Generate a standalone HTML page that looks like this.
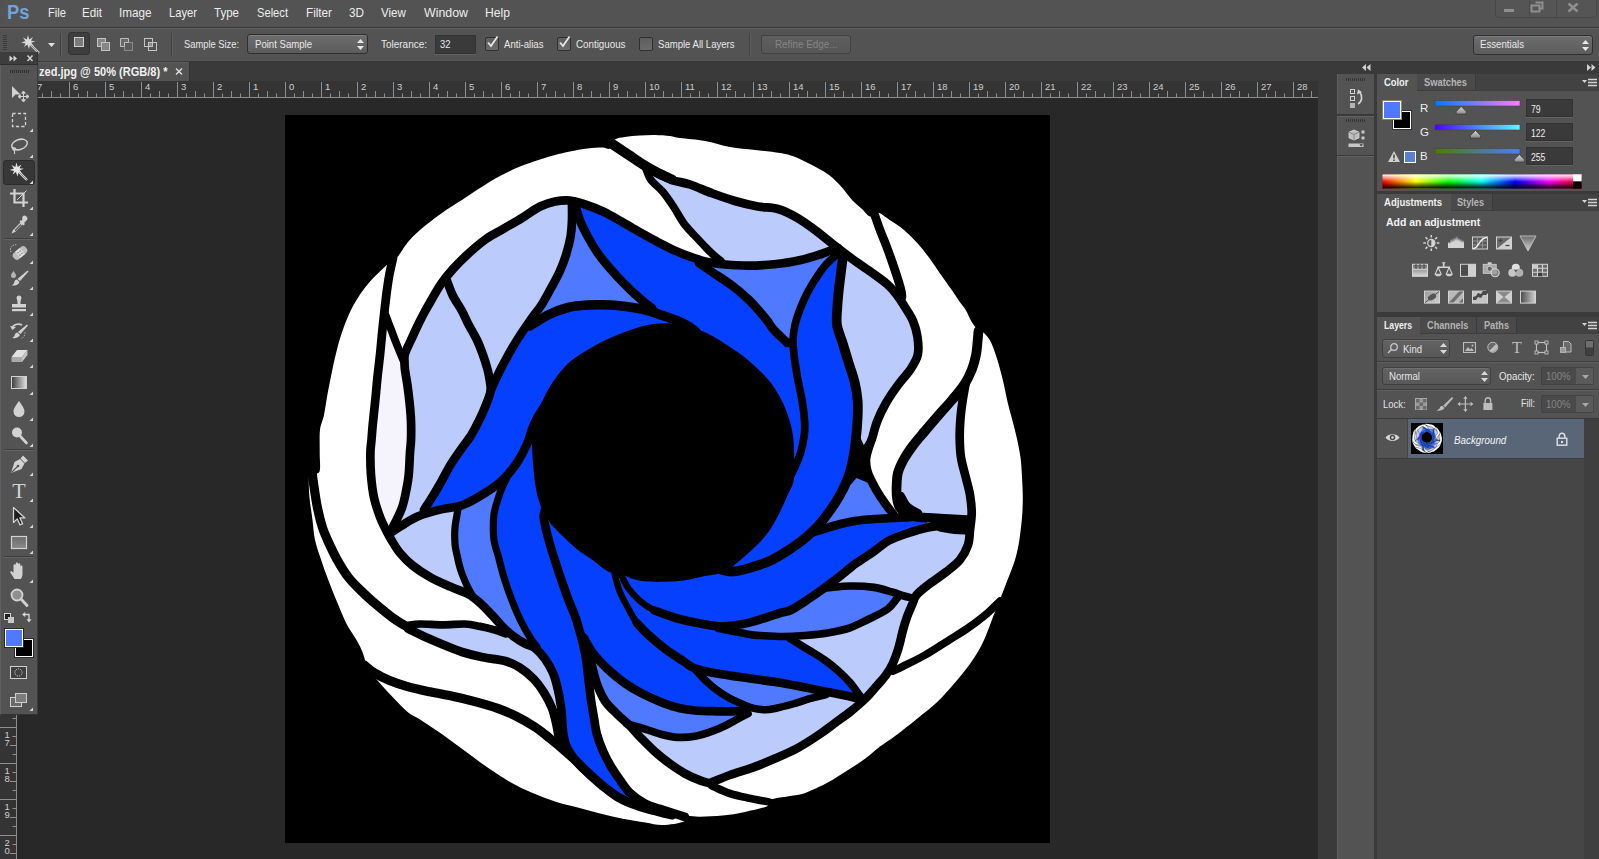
<!DOCTYPE html>
<html>
<head>
<meta charset="utf-8">
<title>Photoshop</title>
<style>
html,body{margin:0;padding:0;}
body{width:1599px;height:859px;overflow:hidden;background:#282828;position:relative;font-family:"Liberation Sans","DejaVu Sans",sans-serif;font-size:11px;color:#e4e4e4;}
.abs,.abs>*{position:absolute;}
.t{position:absolute;white-space:nowrap;line-height:14px;height:14px;transform-origin:0 50%;}
#menubar{left:0;top:0;width:1599px;height:27px;background:#535353;}
#menubar .t{top:6px;font-size:13px;color:#ededed;}
#optbar{left:0;top:28px;width:1599px;height:33px;background:#535353;box-shadow:inset 0 1px 0 #646464;}
#optbar .t{top:9px;color:#e8e8e8;}
.dd{box-sizing:border-box;border:1px solid #2e2e2e;border-radius:3px;background:linear-gradient(#6d6d6d,#5c5c5c);box-shadow:inset 0 1px 0 #7e7e7e;}
.dd2{border-color:#3f3f3f;background:linear-gradient(#636363,#585858);box-shadow:inset 0 1px 0 #707070;}
.inp{box-sizing:border-box;background:#3a3a3a;border:1px solid #333;box-shadow:0 1px 0 #626262;}
.cb{box-sizing:border-box;width:14px;height:14px;border:1px solid #2f2f2f;border-radius:2px;background:linear-gradient(#5e5e5e,#6b6b6b);}
.vsep{width:1px;background:#3f3f3f;box-shadow:1px 0 0 #5f5f5f;}
#tabbar{left:0;top:62px;width:1336px;height:19px;background:#3a3a3a;}
#tab{left:0;top:62px;width:189px;height:19px;background:#535353;box-shadow:inset 0 1px 0 #5e5e5e;}
#vscroll{left:1318px;top:62px;width:18px;height:797px;background:#3a3a3a;}
#toolbar{left:0;top:52px;width:38px;height:663px;background:#535353;box-sizing:border-box;border-left:1px solid #606060;border-right:1px solid #3b3b3b;border-bottom:1px solid #333;}
#dock{left:1336px;top:62px;width:263px;height:797px;background:#3a3a3a;}
.panel{background:#535353;}
.ptabs{background:#424242;height:17px;}
.ptab{top:0;height:17px;box-sizing:border-box;font-weight:bold;font-size:11px;}
.ptab.on{background:#535353;color:#f0f0f0;}
.ptab.off{background:#4a4a4a;color:#b4b4b4;border-right:1px solid #3a3a3a;border-bottom:1px solid #3e3e3e;}
.ptab .t{top:1px;}
.dis{color:#858585 !important;}
</style>
</head>
<body>
<div id="menubar" class="abs">
<div class="t" id="ps" style="left:7px;top:1px;height:22px;line-height:22px;font-size:19.500px;font-weight:bold;color:#74a3d8;transform:scaleX(0.943)">Ps</div>
<div class="t m" style="left:47.5px;transform:scaleX(0.859)">File</div>
<div class="t m" style="left:82px;transform:scaleX(0.893)">Edit</div>
<div class="t m" style="left:118.5px;transform:scaleX(0.899)">Image</div>
<div class="t m" style="left:169px;transform:scaleX(0.861)">Layer</div>
<div class="t m" style="left:214px;transform:scaleX(0.887)">Type</div>
<div class="t m" style="left:257px;transform:scaleX(0.858)">Select</div>
<div class="t m" style="left:306px;transform:scaleX(0.900)">Filter</div>
<div class="t m" style="left:349px;transform:scaleX(0.902)">3D</div>
<div class="t m" style="left:381px;transform:scaleX(0.894)">View</div>
<div class="t m" style="left:424px;transform:scaleX(0.951)">Window</div>
<div class="t m" style="left:485px;transform:scaleX(0.935)">Help</div>
<!-- window controls -->
<div style="left:1495px;top:-4px;width:102px;height:22px;box-sizing:border-box;border:1px solid #474747;border-radius:4px;background:#555;"></div>
<div style="left:1529px;top:0;width:1px;height:17px;background:#494949;"></div>
<div style="left:1556px;top:0;width:1px;height:17px;background:#494949;"></div>
<div style="left:1504px;top:9px;width:10px;height:3px;background:#8f8f8f;"></div>
<svg style="left:1530px;top:1px" width="14" height="12" viewBox="0 0 14 12"><path d="M5.5 1.5h7v6h-2M1.5 4.5h8v6h-8z" fill="none" stroke="#8f8f8f" stroke-width="2"/></svg>
<svg style="left:1567px;top:2px" width="12" height="11" viewBox="0 0 12 11"><path d="M1.5 1.5l9 8M10.5 1.5l-9 8" stroke="#8f8f8f" stroke-width="2.4"/></svg>
</div>
<div style="left:0;top:27px;width:1599px;height:1px;background:#383838;" class="abs"></div>
<div id="optbar" class="abs">
<!-- grip -->
<div style="left:3px;top:7px;width:4px;height:16px;background:repeating-linear-gradient(#3c3c3c 0 1px,transparent 1px 2px);"></div>
<!-- wand icon -->
<svg style="left:20px;top:6px" width="22" height="20" viewBox="0 0 22 20"><path d="M8 8L19 19" stroke="#d6d6d6" stroke-width="2.2"/><path d="M8 8L19 19" stroke="#6b6b6b" stroke-width="0.8"/><path d="M8 1l1.2 4.6L13 3l-2 3.8 4.4.4-4.2 1.6 2.6 3.4-3.8-1.8L9 15l-1.6-4.4L4 13l1.6-3.6L1 8.6l4.4-1.4L3 3.6l3.8 1.8z" fill="#dcdcdc"/></svg>
<svg style="left:48px;top:15px" width="7" height="4" viewBox="0 0 7 4"><path d="M0 0h7L3.5 4z" fill="#e0e0e0"/></svg>
<div class="vsep" style="left:60px;top:5px;height:23px;"></div>
<!-- selection mode buttons -->
<div style="left:68px;top:4px;width:22px;height:23px;box-sizing:border-box;border:1px solid #333;border-radius:3px;background:#3e3e3e;"></div>
<svg style="left:68px;top:4px" width="96" height="23" viewBox="0 0 96 23">
<rect x="6.5" y="5.5" width="9" height="9" fill="#7a7a7a" stroke="#cfcfcf"/>
<rect x="29.500" y="6.500" width="8" height="8" fill="#858585" stroke="#c4c4c4"/><rect x="33.500" y="10.500" width="8" height="8" fill="#858585" stroke="#c4c4c4"/><rect x="34" y="11" width="3.500" height="3.500" fill="#858585"/>
<rect x="56.500" y="10.500" width="8" height="8" fill="#5a5a5a" stroke="#8a8a8a"/><path d="M52.500 6.500h8v4h-4v4h-4z" fill="#6a6a6a" stroke="#bdbdbd"/>
<rect x="76.500" y="6.500" width="8" height="8" fill="none" stroke="#c4c4c4"/><rect x="80.500" y="10.500" width="8" height="8" fill="none" stroke="#c4c4c4"/><rect x="81" y="11" width="3" height="3" fill="#8a8a8a"/>
</svg>
<div class="vsep" style="left:171px;top:5px;height:23px;"></div>
<div class="t o" style="left:184px;transform:scaleX(0.849)">Sample Size:</div>
<div class="dd" style="left:247px;top:6px;width:121px;height:20px;"></div>
<div class="t o" style="left:255px;transform:scaleX(0.871)">Point Sample</div>
<svg style="left:357px;top:11px" width="7" height="11" viewBox="0 0 7 11"><path d="M0 4h7L3.500 0zM0 7h7L3.500 11z" fill="#e8e8e8"/></svg>
<div class="t o" style="left:381px;transform:scaleX(0.906)">Tolerance:</div>
<div class="inp" style="left:435px;top:7px;width:41px;height:19px;"></div>
<div class="t o" style="left:440px;transform:scaleX(0.857)">32</div>
<div class="cb" style="left:485px;top:9px;"></div>
<svg style="left:486px;top:7px" width="14" height="14" viewBox="0 0 14 14"><path d="M2 7.500l3 3.500L11.500 1.500" fill="none" stroke="#e6e6e6" stroke-width="1.800"/></svg>
<div class="t o" style="left:504px;transform:scaleX(0.873)">Anti-alias</div>
<div class="cb" style="left:557px;top:9px;"></div>
<svg style="left:558px;top:7px" width="14" height="14" viewBox="0 0 14 14"><path d="M2 7.500l3 3.500L11.500 1.500" fill="none" stroke="#e6e6e6" stroke-width="1.800"/></svg>
<div class="t o" style="left:575.500px;transform:scaleX(0.889)">Contiguous</div>
<div class="cb" style="left:639px;top:9px;"></div>
<div class="t o" style="left:657.500px;transform:scaleX(0.869)">Sample All Layers</div>
<div class="vsep" style="left:749px;top:5px;height:23px;"></div>
<div style="left:761px;top:7px;width:90px;height:19px;box-sizing:border-box;border:1px solid #414141;border-radius:3px;background:linear-gradient(#5f5f5f,#565656);"></div>
<div class="t o dis" style="left:774.500px;transform:scaleX(0.896)">Refine Edge...</div>
<div class="dd" style="left:1473px;top:7px;width:120px;height:20px;"></div>
<div class="t o" style="left:1480px;transform:scaleX(0.878)">Essentials</div>
<svg style="left:1582px;top:12px" width="7" height="11" viewBox="0 0 7 11"><path d="M0 4h7L3.500 0zM0 7h7L3.500 11z" fill="#e8e8e8"/></svg>
</div>
<div style="left:0;top:61px;width:1599px;height:1px;background:#3a3a3a;" class="abs"></div>
<div id="tabbar" class="abs"></div>
<div id="tab" class="abs"><div class="t" id="tabt" style="left:38.500px;top:3px;font-weight:bold;font-size:12px;color:#f0f0f0;transform:scaleX(0.920)">zed.jpg @ 50% (RGB/8) *</div><svg style="left:175px;top:6px" width="8" height="7" viewBox="0 0 8 7"><path d="M1 0.500l6 6M7 0.500l-6 6" stroke="#e0e0e0" stroke-width="1.400"/></svg></div>
<div style="left:189px;top:62px;width:1px;height:19px;background:#2f2f2f" class="abs"></div>
<svg class="abs" id="hruler" style="left:0;top:81px" width="1318" height="17" viewBox="0 81 1318 17"><rect x="0" y="81" width="1318" height="17" fill="#343434"/><defs><pattern id="hp" x="285" y="81" width="36" height="17" patternUnits="userSpaceOnUse"><path d="M0.500 1v15M9.500 12.500v3.500M18.500 10v6M27.500 12.500v3.500" stroke="#8f8f8f" stroke-width="1"/></pattern></defs><rect x="17" y="81" width="1301" height="16" fill="url(#hp)"/><rect x="0" y="97" width="1318" height="1" fill="#8c8c8c"/><g font-family="Liberation Sans, sans-serif" font-size="9.500" fill="#cdcdcd"><text x="37" y="89.700">7</text><text x="73" y="89.700">6</text><text x="109" y="89.700">5</text><text x="145" y="89.700">4</text><text x="181" y="89.700">3</text><text x="217" y="89.700">2</text><text x="253" y="89.700">1</text><text x="289" y="89.700">0</text><text x="325" y="89.700">1</text><text x="361" y="89.700">2</text><text x="397" y="89.700">3</text><text x="433" y="89.700">4</text><text x="469" y="89.700">5</text><text x="505" y="89.700">6</text><text x="541" y="89.700">7</text><text x="577" y="89.700">8</text><text x="613" y="89.700">9</text><text x="649" y="89.700">10</text><text x="685" y="89.700">11</text><text x="721" y="89.700">12</text><text x="757" y="89.700">13</text><text x="793" y="89.700">14</text><text x="829" y="89.700">15</text><text x="865" y="89.700">16</text><text x="901" y="89.700">17</text><text x="937" y="89.700">18</text><text x="973" y="89.700">19</text><text x="1009" y="89.700">20</text><text x="1045" y="89.700">21</text><text x="1081" y="89.700">22</text><text x="1117" y="89.700">23</text><text x="1153" y="89.700">24</text><text x="1189" y="89.700">25</text><text x="1225" y="89.700">26</text><text x="1261" y="89.700">27</text><text x="1297" y="89.700">28</text></g></svg>
<svg class="abs" id="vruler" style="left:0;top:97px" width="17" height="762" viewBox="0 97 17 762"><rect x="0" y="97" width="17" height="762" fill="#343434"/><defs><pattern id="vp" x="0" y="115" width="17" height="36" patternUnits="userSpaceOnUse"><path d="M0 0.500h16M12.500 9.500h3.500M10 18.500h6M12.500 27.500h3.500" stroke="#8f8f8f" stroke-width="1"/></pattern></defs><rect x="0" y="97" width="16" height="762" fill="url(#vp)"/><rect x="16" y="97" width="1" height="762" fill="#8c8c8c"/><g font-family="Liberation Sans, sans-serif" font-size="9.500" fill="#cdcdcd"><text x="4.500" y="125.5">0</text><text x="4.500" y="161.5">1</text><text x="4.500" y="197.5">2</text><text x="4.500" y="233.5">3</text><text x="4.500" y="269.5">4</text><text x="4.500" y="305.5">5</text><text x="4.500" y="341.5">6</text><text x="4.500" y="377.5">7</text><text x="4.500" y="413.5">8</text><text x="4.500" y="449.5">9</text><text x="4.500" y="485.5">1</text><text x="4.500" y="494.0">0</text><text x="4.500" y="521.5">1</text><text x="4.500" y="530.0">1</text><text x="4.500" y="557.5">1</text><text x="4.500" y="566.0">2</text><text x="4.500" y="593.5">1</text><text x="4.500" y="602.0">3</text><text x="4.500" y="629.5">1</text><text x="4.500" y="638.0">4</text><text x="4.500" y="665.5">1</text><text x="4.500" y="674.0">5</text><text x="4.500" y="701.5">1</text><text x="4.500" y="710.0">6</text><text x="4.500" y="737.5">1</text><text x="4.500" y="746.0">7</text><text x="4.500" y="773.5">1</text><text x="4.500" y="782.0">8</text><text x="4.500" y="809.5">1</text><text x="4.500" y="818.0">9</text><text x="4.500" y="845.5">2</text><text x="4.500" y="854.0">0</text></g></svg>
<div class="abs" style="left:0;top:81px;width:17px;height:16px;background:#343434;border-right:1px solid #555;border-bottom:1px solid #555;box-sizing:border-box"></div>
<div id="vscroll" class="abs"></div>
<svg class="abs" id="art" style="left:285px;top:115px" width="765" height="728" viewBox="285 115 765 728">
<g id="artg">
<rect x="285" y="115" width="765" height="728" fill="#000"/>
<path fill="#fff" d="M615 139.5C617.5 137.6 620.8 137.7 625 137C629.2 136.3 635 135.8 640 135.5C645 135.2 650 134.9 655 135C660 135.1 665.8 135.5 670 136C674.2 136.5 674.2 137.2 680 138C685.8 138.8 696.7 139.5 705 141C713.3 142.5 721.7 145.5 730 147C738.3 148.5 746.7 149 755 150C763.3 151 773.8 152 780 153C786.2 154 787.5 154.2 792.5 156C797.5 157.8 803.9 160.8 810 164C816.1 167.2 823.7 171.1 829 175C834.3 178.9 838.2 183.3 842 187.5C845.8 191.7 848.7 196.4 852 200C855.3 203.6 859 206.2 862 209C865 211.8 867.3 215.9 870 216.5C872.7 217.1 874.8 212.3 878 212.8C881.2 213.3 884.7 216.6 889 219.5C893.3 222.4 899.2 226 904 230C908.8 234 913.4 238.8 917.7 243.6C922 248.4 926 253.6 929.7 258.6C933.4 263.6 936.5 268.6 940 273.6C943.5 278.6 947.4 283.9 950.7 288.6C954 293.3 957.3 298.4 959.8 302C962.3 305.6 963.7 306.7 965.7 310C967.7 313.3 969.7 318.8 971.7 322C973.7 325.2 976.3 328.2 977.7 329.5C979.1 330.8 978 327.8 980 329.5C982 331.2 986.9 335 989.8 340C992.7 345 995 352.6 997.3 359.6C999.5 366.6 1001.5 374.8 1003.3 382C1005 389.2 1006.3 396.7 1007.8 403C1009.3 409.3 1010.8 414.2 1012.3 420C1013.8 425.8 1015.4 431.8 1016.8 438C1018.2 444.2 1019.6 451 1020.5 457.5C1021.4 464 1021.6 470.2 1022 477C1022.4 483.8 1022.8 491.2 1022.8 498C1022.8 504.8 1022.5 511.1 1022 517.6C1021.5 524.1 1020.5 531.6 1019.8 537C1019 542.4 1018.5 545.7 1017.5 550C1016.5 554.3 1015.7 558 1014 563C1012.3 568 1009.7 574.3 1007.5 580C1005.3 585.7 1002.6 593 1001 597C999.4 601 998.8 602 998 604C997.2 606 997.3 605.5 996 609C994.7 612.5 992 619.8 990 625C988 630.2 986.1 635.4 984 640C981.9 644.6 980.3 647.9 977.5 652.5C974.7 657.1 971.2 662.4 967.3 667.6C963.3 672.9 958.8 678.3 953.8 684C948.8 689.7 943 696.5 937.2 702C931.4 707.5 924.7 712.5 919.2 717C913.7 721.5 908.7 725.5 904.2 729C899.8 732.5 896.5 735.1 892.5 738C888.5 740.9 884.5 743.2 880 746.6C875.5 750 870.8 754.6 865.3 758.6C859.8 762.6 853.6 766.6 847.3 770.6C841 774.6 834.7 778.9 827.7 782.6C820.7 786.3 811.5 790.8 805.2 793C798.9 795.2 795 795.1 790 796C785 796.9 778.5 797.7 775 798.4C771.5 799.1 770.2 798.8 769 800C767.8 801.2 771.7 803.9 767.7 805.9C763.7 807.9 752.5 810.3 745 811.9C737.5 813.5 730.1 814.8 722.6 815.6C715.1 816.4 706.3 816.6 700 816.7C693.7 816.8 687.7 815.6 685 816.4C682.3 817.2 687.4 820.3 683.6 821.7C679.9 823.1 668.9 824.9 662.5 825C656.1 825.1 651.9 823.4 645.3 822.4C638.7 821.4 630.3 820.2 622.8 818.7C615.2 817.2 607.5 815.3 600 813.4C592.5 811.5 585.2 809.4 577.7 807.4C570.2 805.4 562.5 803.8 555 801.4C547.5 799 540.1 796.2 532.6 793C525.1 789.8 517.5 786.1 510 781.9C502.5 777.7 495.1 772.8 487.6 767.6C480.1 762.5 472.5 756.5 465 751C457.5 745.5 450 739.8 442.5 734.5C435 729.2 425.8 723.2 420 719.5C414.2 715.8 412.2 715.8 407.6 712C403 708.2 397.6 702.2 392.6 697C387.6 691.8 382 685.5 377.5 680.5C373 675.5 367.5 670 365.5 667C363.5 664 366 665 365.5 662.5C365 660 364 655.8 362.5 652C361 648.2 359.1 644.7 356.5 640C353.9 635.3 349.8 630.2 346.6 624C343.4 617.8 340.5 610.2 337.5 603C334.5 595.8 331.2 587.9 328.5 580.6C325.8 573.4 323.2 566.3 321 559.5C318.8 552.7 316.4 546.6 315 540C313.6 533.4 313.4 527.1 312.5 520C311.6 512.9 310.1 504.3 309.5 497.6C308.9 490.9 308.7 483.6 308.8 479.6C308.9 475.6 308.6 474.9 310.3 473.6C312.1 472.3 317.7 475.5 319.3 472C320.9 468.5 319.6 459.5 319.7 452.5C319.8 445.5 319.3 436.2 320 430C320.7 423.8 322.7 421.2 324 415C325.3 408.8 326.4 400.1 327.8 392.6C329.2 385.1 330.7 377.5 332.3 370C333.9 362.5 335.6 354.5 337.5 347.5C339.4 340.5 341.2 334.2 343.5 328C345.8 321.8 348.2 315.6 351 310C353.8 304.4 356.8 299.4 360 294.6C363.2 289.8 366.8 285.3 370.5 281C374.2 276.7 378.9 272.5 382.5 269C386.1 265.5 389.8 262 392.3 260C394.8 258 394.9 260 397.5 257C400.1 254 404.2 246.5 408 242C411.8 237.5 415.5 234 420 230C424.5 226 430 221.8 435 218C440 214.2 445.5 210.5 450 207.5C454.5 204.5 457 203.2 462 200C467 196.8 473.7 192 480 188C486.3 184 493.3 179.6 500 176C506.7 172.4 513.3 169.2 520 166.5C526.7 163.8 534.2 161.4 540 159.5C545.8 157.6 550 156.3 555 155C560 153.7 564.6 152.6 570 151.5C575.4 150.4 582.1 149.2 587.5 148.5C592.9 147.8 598.8 147.5 602.5 147.5C606.2 147.5 607.9 149.8 610 148.5C612.1 147.2 612.5 141.4 615 139.5Z"/>
<path fill="#f5f3fb" d="M387 329L386 329.2L385 330.5L382.2 361.2L380.8 371L378.2 399.8L376.2 415.2L376.2 419.2L373.2 448.2L373.2 468.8L375.2 489.5L378 502.8L383.5 518.8L386.8 525.5L388.8 526.8L390.5 525.8L399.5 507L404 488.5L406.2 473.8L407.2 449.8L408.2 441.5L408.5 426L406.8 400.5L405 389.5L404.5 382.8L402.5 373.2L401.8 362.5L393.2 342L389.2 330.8L388 329.2Z"/>
<path fill="#bacbfc" d="M856.2 702L855 700.5L829 695.2L826.2 696.8L809 701L791.5 706.8L771.8 711.5L760 711.8L752 710.2L750.2 711.2L750 714.5L748.8 715.8L728.5 726.8L712.8 733.8L696.2 738.5L685.8 739.8L674.5 739.5L655.5 735.2L643.2 731L641.8 731.2L640.8 732.5L640.8 733.5L656.5 749.5L673 762.8L682 768.8L690 773.2L701.8 778.2L709.2 780.2L731.8 771.2L749.8 765.8L765.5 759.8L781.2 753L796.8 745.5L814.5 734.5L825 727.2L856 703.5ZM416.5 627.2L416.5 629.5L421.8 632.5L457.8 647.8L478.8 653.8L505.2 658L517.2 662.8L527.8 669.8L536.8 678L546.8 691.5L553.8 705.2L555.8 706.5L557.5 705.5L557.8 703L555.8 691.8L551.5 676.2L547.8 668.2L544.2 662.5L540 656.8L532.5 649.5L526 647.2L515 641L508.5 636L505.2 636.2L502.2 634.8L493.2 631.8L467 626.2L458.5 626.2L444.5 627.2L418.2 626.2ZM910.2 601L909.2 599.8L901.5 597.5L900.5 597.8L894.2 606L887.5 612L879.5 616.5L864.2 623.8L861.2 625.8L849.5 630.5L833.5 634.5L824.2 636L811.2 637.5L800.8 638L799 639L798.8 640.5L800 642L819 653.5L829.5 660.5L843.8 672.8L852 681.2L862.5 695.2L864.8 695.2L881.8 676.2L887.2 668.2L891.8 659.2L897.2 642.8L902 623L904.2 616.2L909.8 603.5ZM966.8 534.2L965.8 533L950.5 532L939.8 530L937.5 529L935 529L920.2 532.2L896 540.2L887.2 544.5L872 556.2L855 567.2L838.2 581.2L838 582.8L839 584L840 584.2L845.8 583.8L859.2 583.8L871.2 584.5L879 585.8L889.2 588.5L902.5 593.2L911.2 595.5L912.8 595.2L915.5 591.8L921.8 586.2L948.8 566.5L957.5 558.5L962.5 551.2L965 545.5L966.8 538ZM393 535L393 537.5L397.2 544.8L402.2 551.5L411.5 561L418.2 566.5L430.2 574.2L442.8 580.5L463 588.5L464.8 587.5L465 586L460.5 576L457.5 566.8L453 546L452.8 528.5L455.2 513.5L455.2 511.8L454.2 510.5L451.5 510.2L442.5 511.8L431.2 514.8L418.8 519L402.2 528.2L395.8 532.5ZM958.8 399.5L956.8 399.5L919 443L908.2 458L902 470.2L900.2 478L899.8 492.2L900.8 493.5L903 494.8L907 502.5L912 507L919.2 511L921.2 514L927 514.8L939.2 515L961.8 516.5L968 516.2L969 515L968.8 505.2L967.2 494.5L958.5 460.2L957.5 452.8L957 445L957.2 422.8L958 413.2L959.8 400.8ZM444.5 285.8L443.2 286L439.2 291.5L424 318.8L408 352.8L407 356.8L407.5 369L410.5 385.8L410.5 389L413.2 411L414 425.8L413.8 442.5L412.8 450.8L411.8 474L410.8 481.8L407.5 498.5L405 508L399.8 519.2L400 521L401.8 522L413.5 515.2L420 512.8L421 511.8L421.5 509L434 489L450.5 459.2L467 436.8L471.2 429.8L481 410L487 394.8L488 390.8L487.8 384L485.2 371L476.8 345.8L471 334.2L466 325.8L459.2 311.5L451 298.2L446.2 286.8ZM847.8 259.5L846 260.5L845.5 262L843 280.2L840 314.5L840 323.8L841.5 330.2L846.5 344.2L851.2 360.8L856 374.5L859.8 390L860.8 397.2L861.2 410L860.5 426.8L859.2 439.8L862 445.5L863.8 446.5L866 445L868 441.8L874.5 420.2L881 406L889.5 392L898.2 380L905.8 371.5L913.8 358.5L915.5 352L915.2 340L913.5 330.5L910.2 321.2L898 301L892 293L886.2 287L879.8 281.5L848.8 259.8ZM567.8 203.2L564.2 203L555.2 204.2L547.5 206.2L542 208.5L536.2 211.8L520.2 222.5L491 238.8L483.8 244L469.5 256.2L455.2 270.5L449 278L449 279.2L456 296L464.5 309.5L471 323.5L476.5 332.8L480.8 341.2L484.5 350.5L489.5 365.8L491.2 374L492.2 375.2L494.2 375.2L495.5 373.8L507 351.2L516.8 335L530 315.8L536.2 308L540.8 301.2L553.8 277.5L559.2 266L563.2 255L566.2 244.2L568.8 230.8L569.2 204.8ZM652.2 176.5L652.2 177.8L653 179L665 190.8L670 197.2L676.8 207.2L683 218.2L688.2 225.5L706.2 244.8L714.2 252.8L721.5 258.5L724 261.5L740.2 262.8L756.8 262.8L770.5 262L786.5 260L797.8 258L812 254.2L829 248.2L830 247L829.8 245.5L819.5 236.8L802.8 224.5L790.2 217L781 212.8L771.5 210.5L756.5 209.2L736.2 204.5L717 198.2L691 187.8L671 182.8L655.2 175.2L653.2 175.2Z"/>
<path fill="#4f7aff" d="M705 675.8L705.2 677.2L713.5 685L726.5 694.2L734.5 698.5L752.8 706L758.2 707.2L767.8 707.8L779.2 705.5L797 700.8L802.8 698.5L813.2 695.5L814.2 694.2L814.2 693.2L813.2 692L787.8 686.8L784 686.5L774.2 684.5L730.5 678.8L711.8 675.5L707.2 674.2L706 674.5ZM594.8 664.2L596 671.5L598 678.8L602.2 690.2L605.8 697.2L610 703L630.2 722.5L638.8 724.5L656.8 730.8L666.5 733.2L675.5 735L684.8 735.2L696.2 733.8L713 728.8L726 723L735 718L736 716.8L735.8 715.2L734 714.2L700.2 713.8L687.8 712.8L679.5 711.2L664.5 706.8L647.2 699.2L634.5 692.8L625.8 687.2L613.2 678L605.8 671.2L597.8 663L595.8 663ZM894.8 596.2L893.5 594.8L877.8 590.2L869.8 589L858 588.2L847.2 588.2L826.5 590.2L820.8 593.8L804.2 605.5L790.8 613.2L780.5 615.8L769.5 619.8L755.5 624L742 627L741 628.2L741 629.2L742.8 630.8L754.8 633L777.2 634.2L789.5 634.2L809.8 633L832 630L847.5 626.2L856 623L882.5 609.8L886.8 607L891.2 602.5L894.5 598ZM496.2 489.2L479.2 500L468.2 505.8L461 508.5L460 509.5L456.8 528.5L456.8 541.5L457.5 548.5L461.2 565.2L464 573.8L466.8 579.5L467.5 582.2L473.8 594L483.5 602.2L509.8 630L517.5 636L525 640.5L526.2 640.8L528 639.8L528.2 638.2L523 629.8L518 620.2L510 601.2L502 578.2L492.2 542.2L491.2 530.5L491.5 517.2L493 508L498.2 492.2L498 490.2ZM888.8 513L877.5 497.5L868.8 481.8L866.8 480.2L856.5 476.2L854.2 477.8L849.2 483.8L843 496.5L834.2 510.5L826 521.5L825.8 523.2L826.8 524.5L827.8 524.8L843.2 520.2L851.8 518.5L868 516.5L886.8 515.5L888.5 514.5ZM829.8 256.2L828.8 255L827.5 254.8L811.8 260.2L800.2 263.2L777 267L758.2 268.2L738.8 268.2L722.5 267.2L714.8 266.2L713 267.2L712.8 268.8L713.8 270L735.5 284.5L749.8 296.8L757.5 304.8L768 317L775.8 328L787.8 339.5L788.8 339.8L789.8 339.5L791 337.5L791.2 331.8L794 319.2L797.8 308.5L802.5 297.2L806.5 289.2L814.5 276L822.5 265L829.2 258.2ZM575.5 222.8L574.5 224L574.2 231L572.2 243L568.8 255.8L564.8 267.2L559.8 278L546.2 302.8L540.5 311.2L540.5 313.2L541.2 314L543.5 314L550 310.5L559.5 306.8L568.8 304L577.8 302.5L589.5 301.8L607.8 301.8L619.2 302.5L638 305.2L639.2 305L640.2 303.8L640 302.2L630.5 294L617.8 281.2L599.2 260L593.2 251.5L587 241L578.2 223.5L577.5 222.8Z"/>
<path fill="#0540ff" d="M618.5 581.2L619 585L622 593.2L635.8 618.8L638.5 620.8L649.8 632.5L663.8 644.5L674.8 652.5L694.2 665.2L705 668.2L724.2 672L789.2 681.2L832.5 690.2L847.5 692.8L851.5 694L852.8 693.8L853.8 692.5L853.5 690.8L849 684.8L838.8 674.2L832 668.2L816.5 657.2L792.8 643L787.5 639L753 637.5L719 631L715.2 628.8L709.8 628.2L689.8 624.5L679.2 622L667 618.2L653 612.8L651.2 610.5L641.8 604.5L635.8 599.5L626.8 589L622.2 580.8L620.5 579.8L619.5 580ZM547.5 521L547.2 523L548.5 528.8L557.5 560L568.5 592.2L578 616L581 625L583.5 634.2L586.2 636.5L590.8 645L595.2 651.8L598.8 656L610.8 668.2L623 678.5L637.8 688.2L659.5 698.8L668 702L683.2 706.2L696.8 708L733.2 708.8L737.5 708.2L738.8 707.2L739 705.8L738 704.5L728.2 700L716 692.2L703.5 681.5L693.5 670.8L689 668.8L682.8 664L666.8 653.8L654.8 644.2L644.5 635.2L635 625L633.8 621L631 617L621.5 599.2L616.5 587.2L612.5 571.8L604.8 567.5L592.5 557.5L577.8 547.8L566.8 538L555.2 526.2L550.2 520.2L548.2 520.2ZM927.5 522.5L926.5 521.2L919.2 520.8L914 519.8L875.8 521.5L854.8 523.8L845.8 525.5L833.5 528.8L813.8 535L803.2 544L793 551.2L774.2 562.5L762 567.8L738 574.2L728 574.8L721.8 573.5L719.8 572.2L718.2 572L707 573.8L688 578.2L681.5 579.2L661 580.2L651.2 580.2L640 579.2L631 576.5L625.8 574L623.8 575L623.5 576.5L629 586.8L635.8 595L643.5 602L652.5 607.8L656.2 608L670.5 613.5L680.8 616.5L693.5 619.5L711.2 622.8L717.5 623.5L727 623.5L740.2 621.8L754 618.5L767.2 614.5L775 611.5L782.5 609.2L787.2 608.5L792 606.5L802.5 600L822.2 586.2L837.5 574.8L852.5 562.2L870.5 550.5L884.8 539.5L892.8 535.5L901.5 532.2L918.8 526.8L926.5 525L927.5 523.8ZM530.8 443L524.2 456.2L520.2 463L514 471.8L509 477.5L500.5 497L496.5 510.5L495.5 517.8L495.5 536.8L496.8 544.2L500.2 555.2L505.2 575.2L513.2 598.5L521 617L527.5 629.5L534 640.2L538.5 645.5L539.2 648L544.5 653.5L548 658.2L552.8 666L556.5 674L559.5 684L562.5 697.5L564.2 709.8L565.8 733L567.8 742L570 747.5L577 757.8L597.8 777.8L609 787.2L616.5 792.8L624.5 797.2L626.8 797.2L627.8 796L627.5 794.5L624.5 791.2L615 778L606.5 764.5L598 746.5L594.2 735.2L588.8 704.8L583.5 659.2L581 646.5L576 627.5L573 618.2L563.8 595.2L552.2 561.5L546.8 543.2L541.5 522.5L540.8 515.2L542.2 510.2L542.8 505.8L541.2 502.8L539.2 496L536.5 481.2L534 454.2L533.8 444.2L532.8 443ZM670.8 322L670 321.2L651 314.5L637.5 311.2L614.2 308.2L592.5 307.8L575.8 309L564 311.8L552.8 316L544 320.5L531 328.8L527.8 329.2L525.8 331.5L516.2 346.2L503 370.5L493.8 390.2L492 397L486 412.2L477.5 429.8L471.8 439.5L454.8 463L449.2 472.2L442 486.2L430 505.8L430 507.8L430.8 508.5L432.5 508.8L441 506.2L453.5 504.5L460 503L466.8 500.2L477.2 494.8L490.5 486.2L498.2 480.2L506.8 471.8L515.2 460.5L520 452.5L525.5 440.8L528.5 430.5L533.5 418.5L538.5 410L543.2 403.2L551.8 386.8L563.2 371L569.5 364.5L573.5 361.2L589.8 350.5L600 344.8L616.2 337L638.8 328.8L643.5 327.5L656 325.2L670 324.8L671 323.5ZM838.2 258L835.8 258.2L827 266.8L819 277.5L813 287L807.8 296.8L801 312.5L798 321.8L796.2 329.2L795.2 338.2L795.8 352.2L800.5 382.5L804.2 398.8L807 422.2L806.8 434.2L805.2 443.8L802.2 455.5L796 470.5L792 478.2L791 484L780 508L771 525L764 535L760 539.5L749.2 550.2L732 565L731.8 566.5L732.8 567.8L735.2 568L740.5 567L764 560L774.5 555L781.2 551L800.5 537.8L808.8 530.8L815.5 524L820.2 518.5L829.2 506.2L839.2 489.8L843 482.2L845.5 475.8L849 463L851.5 449.2L854 426.5L854.8 406.5L854.2 397.8L851.8 383.8L840.5 346.8L835 331L833.5 324.2L833.5 313.8L835.2 290.8L839.2 261.2L839.2 259.2ZM580.2 206.5L579.2 207.8L579.2 209.2L583 221L588.5 232.5L597.2 247.5L603.8 256.8L614.2 269.2L636 291.5L646 300.2L652.8 305L654.2 306.5L654.8 308.5L655.8 309.8L674.5 316.2L687 321.8L692.5 325L700 332L715 339.5L735.8 352.8L751.2 365L766.8 380.2L771.2 386.2L778.8 398.5L782.5 406L786.8 417L790.2 429.5L791.2 435.5L792.2 448.5L792.2 458.5L793.2 459.8L795.2 459.8L797.8 454.8L801.2 441L802.5 431L802.5 422.8L800.8 405.5L799.5 397.5L794.8 376L792.2 360.2L790.8 346.5L790 345.8L787 345.8L785.5 345L771.2 331.2L763.8 320.5L748.8 303.5L739 294.5L726.8 285L698.2 266L696.8 264.5L695.2 261.5L679.5 255.8L662 247.5L640.2 235.8L618.2 222.8L602.5 214.2L586.2 207.8L581.2 206.2Z"/>
<g fill="none" stroke="#000" stroke-linecap="round" stroke-linejoin="round">
<path stroke-width="8.7" d="M393 258C391.8 263.7 390.3 269.7 389.3 275C388.3 280.3 387.8 284.5 387 290C386.2 295.5 385.6 301.5 384.8 308C384.1 314.5 383.3 321.2 382.5 329C381.7 336.8 380.9 346.7 380 355C379.1 363.3 378.1 371 377.3 379C376.5 387 375.8 395.5 375 403C374.2 410.5 373.4 417.8 372.8 424C372.2 430.2 371.9 435.2 371.5 440C371.1 444.8 370.5 446.7 370.4 452.5C370.3 458.3 370.4 467.5 371 475C371.6 482.5 372.5 490.6 374 497.6C375.5 504.6 378 511.6 380 517C382 522.4 384 526 386 530C388 534 389.7 537.2 392 541C394.3 544.8 396.6 548.9 400 553C403.4 557.1 407.5 561.4 412.6 565.5C417.7 569.6 424.5 574 430.7 577.5C436.9 581 443.8 583.9 450 586.6C456.2 589.4 463 591.3 468 594C473 596.7 476 599.5 480 603C484 606.5 488.2 611 492 615C495.8 619 499.3 623.5 502.8 627C506.3 630.5 509.3 633.2 513 636C516.7 638.8 521.3 641.6 525 643.6C528.7 645.6 531.7 645.4 535 648C538.3 650.6 542 654.8 545 659C548 663.2 550.8 667.8 553 673C555.2 678.2 556.7 684.3 558 690C559.3 695.7 560.2 701.2 561 707C561.8 712.8 562.1 720.3 562.5 725C562.9 729.7 562.9 731.7 563.5 735C564.1 738.3 564.7 741.7 566 745C567.3 748.3 569.2 751.7 571.5 755C573.8 758.3 576.6 761.4 580 765C583.4 768.6 588 772.7 592 776.5"/>
<path stroke-width="8.7" d="M389 534C391 530.3 392.9 527.3 395 523C397.1 518.7 400.1 513 401.9 508C403.7 503 404.6 498.5 405.7 493C406.8 487.5 408 481.8 408.7 475C409.4 468.2 409.6 458.3 410 452.5C410.4 446.7 410.8 445.2 411 440C411.2 434.8 411.2 427.2 411 421C410.8 414.8 410.2 409 409.6 403C409 397 408.2 390.5 407.4 385C406.6 379.5 405.5 373.8 405 370C404.5 366.2 404.5 364.7 404.5 362C404.5 359.3 403.9 357.3 405 353.6C406.1 349.9 408.7 345 411 340C413.3 335 416.4 328.2 418.7 323.5C421 318.8 422.4 316.1 424.6 312C426.8 307.9 429.3 303.7 432 299C434.7 294.3 437.5 289 441 284C444.5 279 448.5 274 453 269C457.5 264 462.5 259 468 254C473.5 249 480 243.2 486 239C492 234.8 498 232 504 228.5C510 225 516 221.7 522 218C528 214.3 534.5 209.2 540 206.5C545.5 203.8 550 202.5 555 201.5C560 200.5 565 200 570 200.5C575 201 579.5 202.7 585 204.5C590.5 206.3 597 208.7 603 211.5C609 214.3 615 217.9 621 221.3C627 224.7 633 228.4 639 231.8C645 235.2 651 238.5 657 241.6C663 244.7 669.5 248.1 675 250.6C680.5 253.1 685 254.8 690 256.6C695 258.4 700 260.3 705 261.5C710 262.7 713.7 263.3 720 264C726.3 264.7 735.3 265.3 742.8 265.5C750.3 265.7 758.4 265.4 765 265C771.6 264.6 776.3 264.2 782.5 263.3C788.7 262.4 795.8 261.3 802 259.8C808.2 258.3 815 256.1 820 254.5C825 252.9 829 251.1 832 250C835 248.9 836 248.7 838 248"/>
<path stroke-width="7.7" d="M384.5 312C385.5 314.7 386.5 317.3 387.5 320C388.5 322.7 389.2 324.7 390.5 328C391.8 331.3 393.3 335.7 395 340C396.7 344.3 399 349.9 400.5 353.6C402 357.3 402.8 359.2 404 362"/>
<path stroke-width="8.7" d="M874 213C876 218.7 878 224.7 880 230C882 235.3 883.9 239.5 886 245C888.1 250.5 890.6 257.5 892.5 263C894.4 268.5 896.1 273.5 897.5 278C898.9 282.5 900.2 286.8 901 290C901.8 293.2 901.7 294.7 902 297"/>
<path stroke-width="10" d="M613 144.5C618 147.8 623 151.2 628 154.5C633 157.8 638.2 161.5 643 164.5C647.8 167.5 652.2 170 657 172.5C661.8 175 667 177.2 672 179.5"/>
<path stroke-width="8.7" d="M643 164.5C647.7 167.2 652.2 169.9 657 172.5C661.8 175.1 666.5 178 672 180C677.5 182 683.2 182.2 690 184.5C696.8 186.8 705.2 190.8 712.7 193.5C720.2 196.2 727.5 198.8 735 201C742.5 203.2 750.6 205.2 757.8 206.5C765 207.8 771.4 207.1 778 209C784.6 210.9 791 214.2 797.5 218C804 221.8 810.8 226.8 817 231.5C823.2 236.2 829 241.3 835 246C841 250.7 847 255.2 853 259.5C859 263.8 865.3 267.9 871 272C876.7 276.1 882.7 280.2 887 284C891.3 287.8 893.9 291 897 295C900.1 299 902.8 303.7 905.5 308C908.2 312.3 911 316.2 913 321C915 325.8 916.7 331.3 917.5 337C918.3 342.7 919 349.5 917.7 355C916.5 360.5 913.3 365 910 370C906.7 375 902 379.5 898 385C894 390.5 889.4 397.1 886 403C882.6 408.9 879.8 414.8 877.5 420.5C875.2 426.2 874 432.3 872.5 437C871 441.7 869.6 444.8 868.5 448.5C867.4 452.2 866.2 455.5 866 459C865.8 462.5 866.2 466.1 867 469.6C867.8 473.1 869.2 476.3 871 480C872.8 483.7 875.1 488 877.5 492C879.9 496 882.8 500.2 885.5 504C888.2 507.8 890.9 511.1 893.6 514.6"/>
<path stroke-width="7.7" d="M646 169C647.7 172.7 648.2 176.2 651 180C653.8 183.8 659.2 187.5 663 192C666.8 196.5 670.2 201.7 673.7 207C677.2 212.3 680.3 218.6 684 223.6C687.7 228.6 692.3 233 696 237C699.7 241 703 244.5 706 247.6C709 250.7 711.5 253.3 714 255.5C716.5 257.7 718.7 259.2 721 261"/>
<path stroke-width="8.7" d="M447 281C449 286 450.5 291 453 296C455.5 301 459.5 306.4 462 311C464.5 315.6 465.5 318.7 468 323.5C470.5 328.3 474.5 334.8 477 340C479.5 345.2 481.2 350 483 355C484.8 360 486.5 365.5 487.7 370C488.9 374.5 489.5 378.7 490 382C490.5 385.3 490.9 387.5 490.7 390C490.5 392.5 490.3 393.3 489 397C487.7 400.7 485.2 407 483 412C480.8 417 477.9 422.8 475.7 427C473.5 431.2 472.2 433.7 470 437C467.8 440.3 465.9 442.4 462.7 447C459.5 451.6 454.5 458.3 450.7 464.5C446.9 470.7 443.3 478.2 440 484C436.7 489.8 433.7 494.7 431 499C428.3 503.3 426.3 506.3 424 510"/>
<path stroke-width="8.7" d="M572 203C572 208.7 572.2 214.3 572 220C571.8 225.7 571.5 231.2 570.5 237C569.5 242.8 567.8 249.2 566 255C564.2 260.8 562.1 266.3 559.5 272C556.9 277.7 553.5 283.5 550.5 289C547.5 294.5 544.8 299.8 541.5 305C538.2 310.2 534.4 314.4 530.5 320C526.6 325.6 521.6 332.9 518 338.5C514.4 344.1 511.8 348.6 509 353.6C506.2 358.6 503.4 363.9 501 368.6C498.6 373.3 496.2 378.4 494.5 382C492.8 385.6 492.2 387.3 491 390"/>
<path stroke-width="8.7" d="M576 208C577.5 212.7 578.6 217.2 580.6 222C582.6 226.8 585.3 232 588 237C590.7 242 593.7 247.2 597 252C600.3 256.8 603.8 261.1 607.6 265.6C611.4 270.1 615.6 274.8 619.6 279C623.6 283.2 627.6 287.2 631.6 291C635.6 294.8 640.2 298.9 643.6 301.7C647 304.5 649.2 305.9 652 308"/>
<path stroke-width="9.6" d="M529.5 326C536 322.2 542.6 317.6 549 314.5C555.4 311.4 561.6 309.1 568 307.5C574.4 305.9 580.6 305.4 587.6 305C594.6 304.6 602.5 304.6 610 305C617.5 305.4 626.3 306.6 632.6 307.5C638.9 308.4 642.7 309.2 647.7 310.5C652.7 311.8 657.7 313.8 662.7 315.5C667.7 317.2 673.3 319.2 677.7 321C682.1 322.8 686 324.7 689 326.5C692 328.3 693.7 330.2 696 332"/>
<path stroke-width="8.7" d="M699 263C703.6 266.2 707.2 268.8 712.7 272.5C718.2 276.2 726.1 281.1 732 285.5C737.9 289.9 743.3 294.6 748 299C752.7 303.4 756.8 308.3 760 312C763.2 315.7 765.2 318 767.5 321C769.8 324 770.7 326.3 774 330C777.3 333.7 783 338.7 787.5 343"/>
<path stroke-width="7.7" d="M837 254C833.3 257.5 829.3 260.8 826 264.6C822.7 268.4 820 272.1 817 276.6C814 281.1 810.8 286.4 808 291.6C805.2 296.8 802.7 302.4 800.5 308C798.3 313.6 796.2 319.7 795 325C793.8 330.3 793.2 335 793 340C792.8 345 793.2 348.7 794 355C794.8 361.3 796.2 370.1 797.5 377.6C798.8 385.1 800.8 392.9 802 400C803.2 407.1 804.1 414.2 804.5 420C804.9 425.8 805 429.5 804.3 435C803.6 440.5 802.1 447.5 800.5 453C798.9 458.5 796.2 464 794.5 468C792.8 472 791.5 474 790 477"/>
<path stroke-width="9.7" d="M843 256.5C842.3 261.7 841.7 266.4 841 272C840.3 277.6 839.4 284 838.8 290C838.2 296 837.6 302.2 837.3 308C837 313.8 836.1 319.2 837 325C837.9 330.8 840.7 336.7 842.6 343C844.5 349.3 846.6 356.1 848.6 362.6C850.6 369.1 853.1 375.8 854.6 382C856.1 388.2 857.1 394 857.6 400C858.1 406 857.9 411.7 857.6 418C857.3 424.3 856.8 431.2 856 438C855.2 444.8 854.3 452.3 853 459C851.7 465.7 850.2 472 848 478C845.8 484 843 489.5 840 495C837 500.5 833.4 505.8 829.7 511C826 516.2 822.3 521.3 818 526C813.7 530.7 809 534.9 804 539C799 543.1 793.4 546.9 787.7 550.6C782 554.3 775.9 558.1 769.6 561C763.3 563.9 756.1 566 750 567.8C743.9 569.5 737.7 571.1 733 571.5C728.3 571.9 725.7 570.5 722 570"/>
<path stroke-width="8.7" d="M965.7 383C964.7 388.7 963.6 394.2 962.7 400C961.8 405.8 961 411.7 960.5 418C960 424.3 959.6 431.4 959.7 438C959.8 444.6 960 451 961 457.5C962 464 964.2 470.8 965.7 477C967.2 483.2 969 489 970 495C971 501 971.7 507.2 971.7 513C971.7 518.8 970.6 524.7 970 530C969.4 535.3 969.7 540 968 545C966.3 550 963.5 555.5 959.8 560C956.1 564.5 951.3 567.8 946 572C940.7 576.2 932.9 581.2 928 585C923.1 588.8 919.2 591.7 916.5 595C913.8 598.3 913.6 601.3 912 605C910.4 608.7 908.5 612.8 907 617C905.5 621.2 904.4 624.8 903 630C901.6 635.2 900.2 642.5 898.5 648C896.8 653.5 895.1 658.5 893 663C890.9 667.5 888.7 671.2 886 675C883.3 678.8 880.5 681.6 877 685.6C873.5 689.6 869.5 694.6 865 699C860.5 703.4 855 708 850 712C845 716 840 719.3 835 723C830 726.7 826.2 729.8 820 734C813.8 738.2 805.2 743.9 797.7 748C790.2 752.1 782.5 755.3 775 758.6C767.5 761.9 760.1 764.9 752.6 767.6C745.1 770.3 736.8 772.6 730 775C723.2 777.4 718 779.7 712 782"/>
<path stroke-width="9.7" d="M978.5 331C978.2 334 978.1 336 977.7 340C977.3 344 977 350 976 355C975 360 973.7 365 971.7 370C969.7 375 967.3 380 964 385C960.7 390 956.2 395 952 400C947.8 405 943.2 409.8 938.7 415C934.2 420.2 929.3 425.9 925 431C920.7 436.1 916.5 440.8 913 445.5C909.5 450.2 906.5 454.5 904 459C901.5 463.5 899.2 468.1 898 472.6C896.8 477.1 896.8 481.8 896.6 486C896.4 490.2 896.5 494.5 897 498C897.5 501.5 898 504.4 899.5 507C901 509.6 903.1 511.8 906 513.5C908.9 515.2 911.3 516.2 917 517C922.7 517.8 931.5 518 940 518.5C948.5 519 958.7 519.5 968 520"/>
<path stroke-width="8" d="M901 496C903 499.3 904.2 503.2 907 506C909.8 508.8 914.3 510.7 918 513"/>
<path stroke-width="8" d="M970 530.5C965 530.3 960 530.5 955 530C950 529.5 945 528.3 940 527.5"/>
<path stroke-width="8.7" d="M810.5 533C814.3 531.8 817.9 530.8 822 529.5C826.1 528.2 829.8 526.9 835 525.5C840.2 524.1 846.5 522.4 853 521.3C859.5 520.2 867 519.5 874 519C881 518.5 888.7 518.3 895 518C901.3 517.7 906.3 517.3 912 517"/>
<path stroke-width="8.7" d="M968 524.5C960.3 524.8 951.7 525 945 525.5C938.3 526 934.3 526.2 928 527.5C921.7 528.8 913.5 531.3 907 533.5C900.5 535.7 893.9 538 889 540.5C884.1 543 881.3 546 877.8 548.5C874.3 551 871.8 552.9 868 555.5C864.2 558.1 858 561.9 855 564C852 566.1 853 565.6 850 568C847 570.4 841.2 575.2 837 578.5C832.8 581.8 829.5 584.2 825 587.5C820.5 590.8 815.5 594.3 810 598C804.5 601.7 797 607 792 609.5C787 612 784.5 611.6 780 613C775.5 614.4 771.2 616.2 765 618C758.8 619.8 750.3 622.6 742.8 624C735.3 625.4 727.5 626.5 720 626.3C712.5 626.1 705.1 624.4 697.7 623C690.4 621.6 683.1 620.1 675.9 618C668.7 615.9 661.6 613 654.5 610.5"/>
<path stroke-width="6.5" d="M675.9 618C668.8 615.5 660.6 613.4 654.5 610.5C648.4 607.6 643.8 604.3 639.4 600.5C635 596.7 631.2 592.3 628.1 587.9C625 583.5 623 578.6 620.5 574"/>
<path stroke-width="7.7" d="M826 588C834 587.3 842 586.1 850 586C858 585.9 867 586.4 874 587.4C881 588.4 887 590.6 892 592C897 593.4 900.7 595 904 596C907.3 597 909.3 597.3 912 598"/>
<path stroke-width="7.7" d="M897.4 598C894.2 601.7 892.6 605.4 887.7 609C882.8 612.6 874.3 616.4 868 619.5C861.7 622.6 856.7 625.5 850 627.8C843.3 630 835.1 631.7 827.6 633C820.1 634.3 812.5 634.9 805 635.5C797.5 636.1 790 636.5 782.5 636.5C775 636.5 765.4 635.8 760 635.5C754.6 635.2 756.9 635.7 750 634.5C743.1 633.3 729.1 630.5 718.7 628.5"/>
<path stroke-width="7.7" d="M790 638.5C796 642.2 802.2 646 808 649.6C813.8 653.2 819.6 656.5 824.6 660C829.6 663.5 833.8 666.8 838 670.6C842.2 674.4 846.5 678.6 850 682.6C853.5 686.6 856.7 691.7 859 694.6C861.3 697.5 862.3 698.2 864 700"/>
<path stroke-width="6.5" d="M614 571C615.8 577.5 616.9 584.2 619.3 590.4C621.6 596.6 625.2 602.6 628.1 608C631 613.4 633.6 618.6 636.9 623C640.2 627.4 644.3 630.7 648 634.5"/>
<path stroke-width="8.7" d="M636.9 623C640.6 626.8 643.1 630.1 648 634.5C652.9 638.9 660 645.1 666 649.6C672 654.1 679.2 658.5 684 661.6C688.8 664.7 688.7 666.2 694.7 668.3C700.7 670.4 710.8 672.3 720 674C729.2 675.7 740 677 750 678.5C760 680 770.8 681.2 780 682.7C789.2 684.2 797.1 686 805 687.5C812.9 689 820.1 690.5 827.6 692C835.1 693.5 844.3 695.2 850 696.4C855.7 697.6 858 698.4 862 699.4"/>
<path stroke-width="7.5" d="M695.5 669.8C698 672.5 699.8 674.9 703 678C706.2 681.1 710.5 685.2 714.7 688.5C718.9 691.8 723.9 695 728.3 697.5C732.7 700 736.9 701.7 741 703.5C745.1 705.3 749 707.2 753 708.2C757 709.2 761.3 709.8 765 709.8C768.7 709.8 770.3 709.5 775 708.5C779.7 707.5 787.2 705.6 793 704C798.8 702.4 804.1 700.3 809.6 698.7C815.1 697.1 820.5 696 826 694.6"/>
<path stroke-width="8.7" d="M583.6 637.5C586.6 642.5 588.6 647.4 592.6 652.6C596.6 657.9 602.4 664 607.6 669C612.8 674 618.3 678.5 624 682.6C629.7 686.7 635.5 690.1 642 693.5C648.5 696.9 656.7 700.5 663 703C669.3 705.5 674.7 707 680 708.3C685.3 709.5 689.6 710 695 710.5C700.4 711 706.7 711 712.5 711.2C718.3 711.4 724.4 711.6 730 711.5C735.6 711.4 740.7 710.8 746 710.5"/>
<path stroke-width="8.7" d="M589 655C589.7 657.3 589.7 657.2 591 662C592.3 666.8 594.7 677.5 597 684C599.3 690.5 601.7 696 605 701C608.3 706 612.8 709.8 617 714C621.2 718.2 626.2 722.2 630 726C633.8 729.8 635.8 732.7 640 737C644.2 741.3 650 747.3 655 751.8C660 756.3 665 760.2 670 763.8C675 767.4 680 770.8 685 773.6C690 776.4 695.5 778.7 700 780.4C704.5 782.1 708 782.8 712 784"/>
<path stroke-width="7.7" d="M627 724C631.3 725.2 634.6 725.9 640 727.5C645.4 729.1 653.2 732.2 659.5 733.8C665.8 735.4 671.6 736.9 677.5 737.3C683.4 737.7 689.2 737.3 695 736.3C700.8 735.3 707.4 733 712.5 731.2C717.6 729.4 721.6 727.5 725.7 725.5C729.8 723.5 733.3 721.4 737 719.4C740.7 717.4 744.3 715.5 748 713.5"/>
<path stroke-width="7.7" d="M712 786C718 788.5 724 791.5 730 793.5C736 795.5 741.5 796.6 748 798C754.5 799.4 762 800.7 769 802"/>
<path stroke-width="8.7" d="M547 504C546.2 506.7 545 509.3 544.5 512C544 514.7 543 514.5 544 520C545 525.5 547.7 536.3 550.2 545.1C552.7 553.9 556.1 564 559 572.8C561.9 581.6 564.9 590 567.8 598C570.7 606 573.7 611.5 576.6 620.6C579.5 629.7 583.1 643.5 585 652.6C586.9 661.7 587 667.1 588 675C589 682.9 590 692.8 591 700C592 707.2 593 712.2 594 718C595 723.8 595.5 729 597 734.5C598.5 740 600.7 745.8 603 751C605.3 756.2 607.9 761.2 610.7 766C613.5 770.8 616.5 775.1 619.7 779.6C622.9 784.1 625.8 789 630 793C634.2 797 640 800.9 645 803.6C650 806.3 653.3 806.8 660 809C666.7 811.2 676.7 814.3 685 817"/>
<path stroke-width="9.2" d="M364 664.8C367.5 667.5 370.2 670.4 374.5 673C378.8 675.6 384.1 678.2 389.6 680.5C395.1 682.8 400.9 684.7 407.6 686.6C414.3 688.5 422.5 690.2 430 691.8C437.5 693.4 445.1 694.7 452.6 696.3C460.1 697.9 467.5 699.6 475 701.6C482.5 703.6 490.7 705.8 497.7 708.3C504.7 710.8 510.8 713.5 517 716.6C523.2 719.7 529.5 723.4 535 727C540.5 730.6 545 734.5 550 738.5C555 742.5 560.8 747.4 565 751C569.2 754.6 571.8 757 575 760C578.2 763 580.8 765.9 584 769C587.2 772.1 590.8 775.5 594.5 778.7C598.2 782 602.2 785.5 606 788.5C609.8 791.5 613 794.1 617 796.5C621 798.9 625.3 801.1 630 803C634.7 804.9 640 806.5 645 808C650 809.5 655.5 810.8 660 812C664.5 813.2 668 814 672 815"/>
<path stroke-width="8.7" d="M408 628.6C413 631.1 417.2 633.4 423 636C428.8 638.6 436.2 641.8 442.7 644.5C449.2 647.2 455.3 649.9 462 652C468.7 654.1 475.5 655.8 482.7 657.3C489.9 658.8 498.8 659.2 505 661C511.2 662.8 515.2 664.8 520 667.8C524.8 670.8 529.7 674.9 533.7 679C537.7 683.1 541 687.8 544 692.6C547 697.4 549.8 702.6 551.8 707.6C553.8 712.6 555 718.4 556 722.6C557 726.8 557.3 729.9 558 733C558.7 736.1 559.3 738.3 560 741"/>
<path stroke-width="7.7" d="M405 625.6C410 625.1 413.7 624.1 420 624C426.3 623.9 435.2 624.9 442.7 624.9C450.2 624.9 458.8 623.8 465 624C471.2 624.2 475 625.4 480 626.4C485 627.4 490.7 628.8 495 630C499.3 631.2 502.2 632.6 505.8 633.9"/>
<path stroke-width="9.2" d="M312 472C312.8 478 313.6 484 314.5 490C315.4 496 316.2 501.7 317.5 508C318.8 514.3 320.8 522.3 322.5 527.6C324.2 532.9 325.1 534.7 327.5 540C329.9 545.3 333.5 553.2 337 559.5C340.5 565.8 344.2 572 348.5 577.5C352.8 583 358.1 587.9 363 592.6C367.9 597.4 373 601.8 378 606C383 610.2 388.5 614.7 393 618C397.5 621.3 401 623.1 405 625.6"/>
<path stroke-width="8.7" d="M389 534C393 531.3 396.2 528.9 401 526C405.8 523.1 411.2 519.2 417.7 516.5C424.2 513.8 432.5 511.5 440 509.6C447.5 507.7 455.2 507.8 462.7 505C470.2 502.2 478.3 497.2 485 493C491.7 488.8 497.7 484.6 503 479.6C508.3 474.6 512.9 468.8 516.8 463C520.7 457.2 524.1 450.5 526.6 445C529.1 439.5 530.1 434.5 531.8 430C533.5 425.5 534.6 422.3 537 418C539.4 413.7 543 408.7 546 404"/>
<path stroke-width="7.2" d="M458 509C457 515.2 455.5 521.8 455 527.6C454.5 533.4 454.7 539.4 455 544C455.3 548.6 456.1 550.7 457 555C457.9 559.3 459.1 565 460.7 570C462.3 575 464.8 580.8 466.7 585C468.6 589.2 470.2 591.7 472 595"/>
<path stroke-width="7.2" d="M507.5 476C505 481.7 502.2 486.7 500 493C497.8 499.3 495.1 507 494 514C492.9 521 493.3 529.8 493.5 535C493.7 540.2 494.2 541.7 495 545C495.8 548.3 496.5 549.6 498 555C499.5 560.4 501.7 570 504 577.5C506.3 585 509 592.8 511.8 600C514.6 607.2 517.6 614.5 520.8 621C524 627.5 528.3 634.7 531 639C533.7 643.3 535 644.3 537 647"/>
<path stroke-width="7.7" d="M1000 601C995.1 605.7 990.8 610.4 985.3 615C979.8 619.6 973.6 624.2 967.3 628.5C961 632.8 954.7 636.5 947.7 640.9C940.7 645.3 932.7 650.7 925.2 655C917.7 659.3 908.1 663.8 902.7 666.5C897.3 669.2 896.2 669.5 893 671"/>
</g>
<path fill="#000" d="M686.7 325.3C680.4 323.6 675.3 323.6 670 323.3C664.7 323.1 660 323.2 655 323.8C650 324.4 645 325.4 640 326.8C635 328.2 630 330.1 625 332C620 333.9 615 335.7 610 338C605 340.3 600 342.8 595 345.6C590 348.4 584.5 351.6 580 354.6C575.5 357.6 571.8 360.1 568 363.6C564.2 367.1 560.8 371.4 557.5 375.6C554.2 379.8 551.2 384.3 548.5 389C545.8 393.7 543.2 399 541 404C538.8 409 536.4 414.2 535 419C533.6 423.8 533 429 532.5 432.5C532 436 532 435.6 532 440C532 444.4 532.2 451.6 532.7 458.9C533.2 466.2 534.1 476.7 535.2 484C536.4 491.3 537.4 496.8 539.6 502.9C541.8 509 544.8 515.1 548.4 520.5C552 525.9 556.8 530.4 561.5 535.1C566.2 539.8 571.4 544.7 576.6 548.9C581.8 553.1 587.7 556.4 592.9 560.2C598.1 564 603.2 569.1 608 571.5C612.8 573.9 617.6 573 621.8 574.3C626 575.6 629.1 577.9 633.1 579.1C637.1 580.3 640.5 581.2 645.7 581.6C651 582 658.3 582 664.6 581.8C670.9 581.6 676.7 581.6 683.4 580.6C690.1 579.6 698.1 577.4 705 576C711.9 574.6 718.6 574.7 724.6 572C730.6 569.3 735.8 563.9 741 559.6C746.2 555.3 751.5 550.5 756 546C760.5 541.5 764.2 537.9 768 532.6C771.8 527.4 775.4 520.8 778.7 514.5C782 508.2 785.2 500.8 787.7 495C790.2 489.2 792.7 486.7 793.7 480C794.8 473.3 794.2 462.9 794 455C793.8 447.1 794 440.4 792.5 432.5C791 424.6 788.3 415.4 785 407.5C781.7 399.6 776.7 391.1 772.5 385C768.3 378.9 764.6 375.6 760 371C755.4 366.4 750 361.6 745 357.6C740 353.6 736.2 351 730 347C723.8 343 714.9 337.2 707.7 333.6C700.5 330 693 327 686.7 325.3Z"/>
<path fill="#000" d="M860 437L863.8 445L869 437L866 448.5L863 459L864 469.6L868.5 483L856.5 478L850.5 485L853 477L857.5 459Z"/>
</g>
</svg>
<div id="toolbar" class="abs"></div>
<div class="abs" style="left:0;top:52px;width:38px;height:13px;background:#3d3d3d;border-bottom:1px solid #2e2e2e;box-sizing:border-box;border-right:1px solid #333"></div>
<svg class="abs" style="left:0;top:52px" width="38" height="663" viewBox="0 52 38 663"><path d="M9.500 55.500l3.500 3-3.500 3zM13.500 55.500l3.500 3-3.500 3z" fill="#d8d8d8"/><path d="M27.500 55.500l5 5.500M32.500 55.500l-5 5.500" stroke="#d8d8d8" stroke-width="1.400"/><path d="M10 71.500h19" stroke="#2f2f2f" stroke-width="3" stroke-dasharray="1 1"/><rect x="3.500" y="160.500" width="31" height="24" rx="2.500" fill="#373737" stroke="#2c2c2c"/><path d="M4 238.500h30" stroke="#3e3e3e"/><path d="M4 239.500h30" stroke="#636363"/><path d="M4 449.500h30" stroke="#3e3e3e"/><path d="M4 450.500h30" stroke="#636363"/><path d="M4 556.500h30" stroke="#3e3e3e"/><path d="M4 557.500h30" stroke="#636363"/><g transform="translate(9 83)"><path d="M3 3v12l3.500-3.500h5z" fill="#d2d2d2"/><path d="M14.500 9v9M10 13.500h9M14.500 8l-1.800 2.200h3.600zM14.500 19l-1.800-2.200h3.600zM9 13.500l2.200-1.800v3.600zM20 13.500l-2.200-1.800v3.600z" fill="#d2d2d2" stroke="#d2d2d2" stroke-width="1"/></g><g transform="translate(9 110)"><rect x="3.500" y="3.500" width="13" height="13" fill="none" stroke="#d2d2d2" stroke-width="1.300" stroke-dasharray="3.200 2.200"/></g><path d="M33 132v-3.500l-3.500 3.500z" fill="#d8d8d8"/><g transform="translate(9 136)"><ellipse cx="10.500" cy="8.500" rx="8" ry="5" transform="rotate(-18 10.500 8.500)" fill="none" stroke="#d2d2d2" stroke-width="1.500"/><path d="M4.500 11.500c-1.500 1.500 0 3.500 1.500 2.500s0-3-1.500-1.500c1 2 1.500 3.500 1 5.500" fill="none" stroke="#d2d2d2" stroke-width="1.200"/></g><path d="M33 158v-3.500l-3.500 3.500z" fill="#d8d8d8"/><g transform="translate(9 162)"><path d="M8 8L18 18" stroke="#e2e2e2" stroke-width="2.400"/><path d="M9 9L18 18" stroke="#6b6b6b" stroke-width="0.800"/><path d="M7.500 0.500l1.200 4.600L12.500 2.500l-2 3.800 4.400.4-4.200 1.600 2.600 3.400-3.800-1.800L8.500 14.500l-1.600-4.400L3.500 12.500l1.600-3.600L.5 8.100l4.400-1.400L2.500 3.100l3.800 1.800z" fill="#e6e6e6"/></g><path d="M33 184v-3.500l-3.500 3.500z" fill="#d8d8d8"/><g transform="translate(9 188)"><path d="M5.500 1v13.500H19M1 5.500h13.500V19" fill="none" stroke="#d2d2d2" stroke-width="2.200"/><path d="M17.500 2.500L8 12" stroke="#d2d2d2" stroke-width="1"/></g><path d="M33 210v-3.500l-3.500 3.500z" fill="#d8d8d8"/><g transform="translate(9 214)"><path d="M13.500 2.500a2.300 2.300 0 0 1 4 4l-2.500 2.500 1 1-1.500 1.500-1-1L6 18l-3.500 1.500L4 16l7.500-7.500-1-1L12 6l1 1z" fill="#d2d2d2"/><path d="M6 16.500l6-6" stroke="#555" stroke-width="1.200"/></g><path d="M33 236v-3.500l-3.500 3.500z" fill="#d8d8d8"/><g transform="translate(9 242)"><g transform="rotate(-40 11 11)"><rect x="3" y="7" width="16" height="8" rx="3.500" fill="#bdbdbd"/><rect x="8" y="7" width="6" height="8" fill="#e0e0e0"/><circle cx="9.700" cy="9.500" r=".7" fill="#666"/><circle cx="12.300" cy="9.500" r=".7" fill="#666"/><circle cx="9.700" cy="12.500" r=".7" fill="#666"/><circle cx="12.300" cy="12.500" r=".7" fill="#666"/></g><path d="M2 10a5 5 0 0 1 6-7" fill="none" stroke="#d2d2d2" stroke-width="1" stroke-dasharray="1.200 1.200"/></g><path d="M33 264v-3.500l-3.500 3.500z" fill="#d8d8d8"/><g transform="translate(9 268)"><path d="M18.500 2.500l1 1L11 13l-2.500-2z" fill="#d2d2d2"/><path d="M8 11.500l2.500 2.500c-1 3-4.500 4-8 3.500 2-1 2.500-2 2.800-3.500s1.200-2.500 2.700-2.500z" fill="#d2d2d2"/><path d="M4.500 3c1.500 2 2.500 3.300 2.500 4.500a2.500 2.500 0 0 1-5 0C2 6.300 3 5 4.500 3z" fill="#b5b5b5"/></g><path d="M33 290v-3.500l-3.500 3.500z" fill="#d8d8d8"/><g transform="translate(9 294)"><path d="M7.500 3.500a2.600 2.600 0 0 1 5 0c0 1.500-1 2.500-1 4.500v2h5.500v3.500H3V10h5.500V8c0-2-1-3-1-4.500z" fill="#d2d2d2"/><rect x="3" y="15" width="14" height="2.200" fill="#d2d2d2"/></g><path d="M33 316v-3.500l-3.500 3.500z" fill="#d8d8d8"/><g transform="translate(9 320)"><path d="M18 4.500l1 1L11.500 14 9 12z" fill="#d2d2d2"/><path d="M8.500 12.500L11 15c-1 2.500-4.500 3.500-8 3 2-1 2.500-2 2.800-3.200s1.200-2.300 2.700-2.300z" fill="#d2d2d2"/><path d="M3 8.500C4 4.500 9 3 13 5" fill="none" stroke="#d2d2d2" stroke-width="1.600"/><path d="M1 6l2.500 4L7 7z" fill="#d2d2d2"/><path d="M16 12.500c0 3-1.500 5-3.500 6" fill="none" stroke="#d2d2d2" stroke-width="1" stroke-dasharray="1 1.300"/></g><path d="M33 342v-3.500l-3.500 3.500z" fill="#d8d8d8"/><g transform="translate(9 346)"><path d="M8 4h10.500L13 11H2.500z" fill="#e0e0e0"/><path d="M2.500 11H13v5H2.500z" fill="#a9a9a9"/><path d="M13 11l5.500-7v5L13 16z" fill="#c4c4c4"/></g><path d="M33 368v-3.500l-3.500 3.500z" fill="#d8d8d8"/><g transform="translate(9 373)"><defs><linearGradient id="tg" x1="0" x2="1"><stop offset="0" stop-color="#3c3c3c"/><stop offset="1" stop-color="#e2e2e2"/></linearGradient></defs><rect x="2.500" y="3.500" width="15" height="12" fill="url(#tg)" stroke="#d2d2d2" stroke-width="1"/></g><path d="M33 395v-3.500l-3.500 3.500z" fill="#d8d8d8"/><g transform="translate(9 399)"><path d="M10 2c3 4.500 5.500 7.500 5.500 10.500a5.500 5.500 0 0 1-11 0C4.500 9.500 7 6.500 10 2z" fill="#d2d2d2"/></g><path d="M33 421v-3.500l-3.500 3.500z" fill="#d8d8d8"/><g transform="translate(9 425)"><circle cx="8" cy="7.500" r="5" fill="#d2d2d2"/><path d="M11.500 11.500l6 6.500" stroke="#d2d2d2" stroke-width="2.600" stroke-linecap="round"/></g><path d="M33 447v-3.500l-3.500 3.500z" fill="#d8d8d8"/><g transform="translate(9 454)"><path d="M14 1.500l5 5-3 2.500-4.500-4.500z" fill="#d2d2d2"/><path d="M11 5l4.500 4.500-3 5.500L2 19l3.500-11z" fill="#d2d2d2"/><path d="M2.500 18.500l6-6" stroke="#555" stroke-width="1.100"/><circle cx="9" cy="12" r="1.300" fill="#555"/></g><path d="M33 476v-3.500l-3.500 3.500z" fill="#d8d8d8"/><g transform="translate(9 480)"><text x="10" y="17.500" text-anchor="middle" font-family="Liberation Serif, serif" font-size="22" fill="#d2d2d2">T</text></g><path d="M33 502v-3.500l-3.500 3.500z" fill="#d8d8d8"/><g transform="translate(9 506)"><path d="M4.500 1.500v15l3.800-3.600 2.700 6 2.600-1.200-2.700-5.800h5z" fill="#1e1e1e" stroke="#d2d2d2" stroke-width="1.300" stroke-linejoin="round"/></g><path d="M33 528v-3.500l-3.500 3.500z" fill="#d8d8d8"/><g transform="translate(9 532)"><defs><linearGradient id="rg" x1="0" x2="0" y1="0" y2="1"><stop offset="0" stop-color="#6a6a6a"/><stop offset="1" stop-color="#8a8a8a"/></linearGradient></defs><rect x="2.500" y="4.500" width="15" height="12" fill="url(#rg)" stroke="#d2d2d2" stroke-width="1.200"/></g><path d="M33 554v-3.500l-3.500 3.500z" fill="#d8d8d8"/><g transform="translate(9 561)"><path d="M5.500 18c-1.500-2.500-3-4.500-4.500-7 1-1.300 2.300-.8 3.500 1V4.500c0-1.600 2.200-1.600 2.200 0V9 2.800c0-1.700 2.300-1.700 2.300 0V9 3.500c0-1.600 2.300-1.600 2.300 0V9.500 5.500c0-1.500 2.200-1.500 2.200 0V13c0 2-.8 3.500-1.500 5z" fill="#d2d2d2"/></g><path d="M33 583v-3.500l-3.500 3.500z" fill="#d8d8d8"/><g transform="translate(9 587)"><circle cx="8" cy="8" r="5.500" fill="#8f8f8f" stroke="#d2d2d2" stroke-width="1.800"/><path d="M12.500 12.500l5.500 6" stroke="#d2d2d2" stroke-width="2.800" stroke-linecap="round"/></g><rect x="4.500" y="613.500" width="6" height="6" fill="#222" stroke="#d0d0d0"/><rect x="8" y="617" width="6" height="6" fill="#c8c8c8"/><path d="M24.500 614.500h4.500v5.500" fill="none" stroke="#d6d6d6" stroke-width="1.300"/><path d="M22 614.500l3.200-2.500v5zM29 622.500l-2.500-3.200h5z" fill="#d6d6d6"/><rect x="15.500" y="639.500" width="17" height="17" fill="#000" stroke="#fff"/><rect x="14.500" y="638.500" width="19" height="19" fill="none" stroke="#2a2a2a"/><rect x="5.500" y="629.500" width="17" height="17" fill="#4f7aff" stroke="#fff"/><rect x="4.500" y="628.500" width="19" height="19" fill="none" stroke="#2a2a2a"/><rect x="10.500" y="666.500" width="16" height="12" fill="#3f3f3f" stroke="#d0d0d0"/><circle cx="18.500" cy="672.500" r="3.600" fill="none" stroke="#e0e0e0" stroke-width="1" stroke-dasharray="1 1"/><rect x="10.500" y="697.500" width="11" height="9" fill="#6a6a6a" stroke="#d0d0d0"/><rect x="15.500" y="693.500" width="11" height="9" fill="#7c7c7c" stroke="#d0d0d0"/><path d="M33 711v-3.500l-3.500 3.500z" fill="#d8d8d8"/></svg>
<div id="dock" class="abs"></div>
<div class="abs" id="dk" style="left:0;top:0;width:1599px;height:859px;">
<svg style="left:1362px;top:64px" width="9" height="7" viewBox="0 0 9 7"><path d="M4 0v7L0 3.500zM8.500 0v7L4.500 3.500z" fill="#d0d0d0"/></svg><svg style="left:1587px;top:64px" width="9" height="7" viewBox="0 0 9 7"><path d="M0 0v7L4 3.500zM4.500 0v7L8.500 3.500z" fill="#d0d0d0"/></svg>
<div style="left:1337px;top:74px;width:37px;height:785px;background:#535353;box-shadow:inset 1px 0 0 #5e5e5e;"></div><div style="left:1337px;top:114px;width:37px;height:2px;background:#3a3a3a;"></div><div style="left:1337px;top:155px;width:37px;height:1px;background:#3a3a3a;"></div><div style="left:1337px;top:156px;width:37px;height:1px;background:#626262;"></div><div style="left:1337px;top:116px;width:37px;height:1px;background:#626262;"></div><svg style="left:1337px;top:74px" width="37" height="82" viewBox="0 0 37 82"><path d="M9 5.500h19M9 46.500h19" stroke="#2f2f2f" stroke-width="2.600" stroke-dasharray="1 1"/><rect x="13.500" y="15.500" width="4" height="4" fill="none" stroke="#d0d0d0"/><rect x="13.500" y="22.500" width="4" height="4" fill="none" stroke="#d0d0d0"/><rect x="13" y="29" width="5" height="5" fill="#b5b5b5"/><path d="M21 30c4-2 5-8 1.500-12.500" fill="none" stroke="#d0d0d0" stroke-width="1.700"/><path d="M20 20.500l1-5 4 2.500z" fill="#d0d0d0"/><path d="M17 56l-5 2.200v5.600l5 2.200 5-2.200v-5.600z" fill="#bdbdbd" stroke="#e0e0e0" stroke-width=".8"/><path d="M12 58.200l5 2.300 5-2.300M17 60.500v5.500" fill="none" stroke="#777" stroke-width=".8"/><rect x="24.500" y="56.500" width="3" height="3" fill="#c8c8c8"/><rect x="24.500" y="62.500" width="3" height="3" fill="#c8c8c8"/><rect x="11.500" y="69.500" width="15" height="3.500" fill="#c8c8c8"/><path d="M22.500 70.300h3.400l-1.700 2.200z" fill="#333"/></svg>
<div class="panel" style="left:1377px;top:74px;width:222px;height:117px;"></div><div class="ptabs" style="left:1377px;top:74px;width:222px;"></div><div class="ptab on" style="left:1377px;top:74px;width:40px;"><div class="t pt" style="left:7.2px;transform:scaleX(0.853)">Color</div></div><div class="ptab off" style="left:1417px;top:74px;width:59px;"><div class="t pt" style="left:7.2px;transform:scaleX(0.847)">Swatches</div></div><svg style="left:1582px;top:78px" width="15" height="9" viewBox="0 0 15 9"><path d="M0 2h5L2.500 5z" fill="#d6d6d6"/><path d="M6 1.500h9M6 4.500h9M6 7.500h9" stroke="#d6d6d6" stroke-width="1.300"/></svg>
<svg style="left:1377px;top:91px" width="222" height="100" viewBox="1377 91 222 100"><rect x="1393.500" y="111.500" width="17" height="17" fill="#000" stroke="#fff"/><rect x="1392.500" y="110.500" width="19" height="19" fill="none" stroke="#333"/><rect x="1383.500" y="101.500" width="17" height="17" fill="#4f7aff" stroke="#fff"/><rect x="1382.500" y="100.500" width="19" height="19" fill="none" stroke="#8a8660"/><defs><linearGradient id="gr"><stop offset="0" stop-color="#007aff"/><stop offset="1" stop-color="#ff7aff"/></linearGradient><linearGradient id="gg"><stop offset="0" stop-color="#4f00ff"/><stop offset="1" stop-color="#4fffff"/></linearGradient><linearGradient id="gb"><stop offset="0" stop-color="#4f7a00"/><stop offset="1" stop-color="#4f7aff"/></linearGradient><linearGradient id="th" x1="0" x2="0" y1="0" y2="1"><stop offset="0" stop-color="#d8d8d8"/><stop offset="1" stop-color="#8a8a8a"/></linearGradient><linearGradient id="sp"><stop offset="0" stop-color="#f00"/><stop offset=".167" stop-color="#ff0"/><stop offset=".333" stop-color="#0f0"/><stop offset=".5" stop-color="#0ff"/><stop offset=".667" stop-color="#00f"/><stop offset=".833" stop-color="#f0f"/><stop offset="1" stop-color="#f00"/></linearGradient><linearGradient id="sv" x1="0" x2="0" y1="0" y2="1"><stop offset="0" stop-color="#fff"/><stop offset=".5" stop-color="#fff" stop-opacity="0"/><stop offset=".5" stop-color="#000" stop-opacity="0"/><stop offset="1" stop-color="#000"/></linearGradient></defs><rect x="1435" y="100.5" width="85" height="5.500" fill="url(#gr)" stroke="#444" stroke-width=".6"/><path d="M1461.2 106.5l5 5v2.500h-10v-2.500z" fill="url(#th)" stroke="#3a3a3a" stroke-width=".7"/><rect x="1435" y="124.5" width="85" height="5.500" fill="url(#gg)" stroke="#444" stroke-width=".6"/><path d="M1475.5 130.5l5 5v2.500h-10v-2.500z" fill="url(#th)" stroke="#3a3a3a" stroke-width=".7"/><rect x="1435" y="148.5" width="85" height="5.500" fill="url(#gb)" stroke="#444" stroke-width=".6"/><path d="M1519.3 154.5l5 5v2.500h-10v-2.500z" fill="url(#th)" stroke="#3a3a3a" stroke-width=".7"/><rect x="1526.500" y="99.5" width="46" height="17" fill="#3a3a3a" stroke="#323232"/><path d="M1526 117.5h47" stroke="#636363"/><rect x="1526.500" y="123.5" width="46" height="17" fill="#3a3a3a" stroke="#323232"/><path d="M1526 141.5h47" stroke="#636363"/><rect x="1526.500" y="147.5" width="46" height="17" fill="#3a3a3a" stroke="#323232"/><path d="M1526 165.5h47" stroke="#636363"/><path d="M1394 151l6 11h-12z" fill="#d0d0d0"/><path d="M1394 154.500v4M1394 159.500v1.500" stroke="#444" stroke-width="1.500"/><rect x="1404.500" y="151.500" width="11" height="11" fill="#5b80d2" stroke="#fff"/><rect x="1382.500" y="174.500" width="199" height="14" fill="url(#sp)"/><rect x="1382.500" y="174.500" width="199" height="14" fill="url(#sv)"/><rect x="1573" y="174.500" width="8.500" height="7" fill="#fff"/><rect x="1573" y="181.500" width="8.500" height="7" fill="#000"/></svg>
<div class="t" style="left:1420px;top:101px;font-size:11.500px;color:#ececec">R</div><div class="t" style="left:1420px;top:124.5px;font-size:11.500px;color:#ececec">G</div><div class="t" style="left:1420px;top:148.5px;font-size:11.500px;color:#ececec">B</div><div class="t cv" style="left:1531.400px;top:101.5px;color:#ececec;transform:scaleX(0.784)">79</div><div class="t cv" style="left:1531.400px;top:125.5px;color:#ececec;transform:scaleX(0.784)">122</div><div class="t cv" style="left:1531.400px;top:149.5px;color:#ececec;transform:scaleX(0.784)">255</div>
<div class="panel" style="left:1377px;top:194px;width:222px;height:118px;"></div><div class="ptabs" style="left:1377px;top:194px;width:222px;"></div><div class="ptab on" style="left:1377px;top:194px;width:73.5px;"><div class="t pt" style="left:7.3px;transform:scaleX(0.871)">Adjustments</div></div><div class="ptab off" style="left:1450.5px;top:194px;width:42px;"><div class="t pt" style="left:6.5px;transform:scaleX(0.833)">Styles</div></div><svg style="left:1582px;top:198px" width="15" height="9" viewBox="0 0 15 9"><path d="M0 2h5L2.500 5z" fill="#d6d6d6"/><path d="M6 1.500h9M6 4.500h9M6 7.500h9" stroke="#d6d6d6" stroke-width="1.300"/></svg>
<div class="t" id="addadj" style="left:1386px;top:215px;font-weight:bold;font-size:11px;color:#f2f2f2;transform:scaleX(0.952)">Add an adjustment</div>
<svg style="left:1377px;top:211px" width="222" height="101" viewBox="1377 211 222 101"><defs><linearGradient id="ag" x1="0" x2="1" y1="0" y2="1"><stop offset="0" stop-color="#9a9a9a"/><stop offset="1" stop-color="#cfcfcf"/></linearGradient><linearGradient id="ah" x1="0" x2="1"><stop offset="0" stop-color="#4a4a4a"/><stop offset="1" stop-color="#d0d0d0"/></linearGradient><linearGradient id="av" x1="0" x2="0" y1="0" y2="1"><stop offset="0" stop-color="#6a6a6a"/><stop offset="1" stop-color="#d8d8d8"/></linearGradient></defs><circle cx="1431.3" cy="243" r="3.600" fill="#555" stroke="#d4d4d4" stroke-width="1.200"/><path d="M1431.3 239.4a3.600 3.600 0 0 1 0 7.200z" fill="#d4d4d4"/><path d="M1436.8 243.0L1439.3 243.0" stroke="#d4d4d4" stroke-width="1.500"/><path d="M1435.2 246.9L1437.0 248.7" stroke="#d4d4d4" stroke-width="1.500"/><path d="M1431.3 248.5L1431.3 251.0" stroke="#d4d4d4" stroke-width="1.500"/><path d="M1427.4 246.9L1425.6 248.7" stroke="#d4d4d4" stroke-width="1.500"/><path d="M1425.8 243.0L1423.3 243.0" stroke="#d4d4d4" stroke-width="1.500"/><path d="M1427.4 239.1L1425.6 237.3" stroke="#d4d4d4" stroke-width="1.500"/><path d="M1431.3 237.5L1431.3 235.0" stroke="#d4d4d4" stroke-width="1.500"/><path d="M1435.2 239.1L1437.0 237.3" stroke="#d4d4d4" stroke-width="1.500"/><path d="M1448 248L1448 243L1449 242L1450 244L1451 239L1452 243L1453 238L1454 242L1455 237L1456 241L1457 236L1458 241L1459 238L1460 242L1461 239L1462 243L1463 240L1464 243L1464 248z" fill="#d4d4d4"/><rect x="1472.5" y="237" width="15" height="12" fill="#5a5a5a" stroke="#d4d4d4"/><path d="M1472.5 241h15M1472.5 245h15M1477.5 237v12M1482.5 237v12" stroke="#a0a0a0" stroke-width=".8"/><path d="M1473 248.5c6 0 6-11 14-11" fill="none" stroke="#f0f0f0" stroke-width="1.400"/><rect x="1496.5" y="237" width="15" height="12" fill="#6a6a6a" stroke="#d4d4d4"/><path d="M1511.5 237L1511.5 249h-15z" fill="#cfcfcf"/><path d="M1498.5 240.5h4M1500.5 238.5v4" stroke="#444" stroke-width="1.200"/><path d="M1505.5 245.5h4" stroke="#444" stroke-width="1.200"/><path d="M1520 236h16l-8 15z" fill="url(#av)" stroke="#bdbdbd" stroke-width="1"/><rect x="1412.5" y="264.3" width="15" height="12" fill="url(#av)" stroke="#d4d4d4"/><path d="M1416 264.3v5M1420 264.3v5M1424 264.3v5" stroke="#555" stroke-width="1.600"/><path d="M1412.5 269.3h15" stroke="#d4d4d4"/><path d="M1437.7 267.3h12M1443.7 263.8v4" stroke="#d4d4d4" stroke-width="1.600"/><path d="M1438.2 267.3l-3 7h6zM1449.2 267.3l-3 7h6z" fill="none" stroke="#d4d4d4" stroke-width="1.100"/><path d="M1435.2 274.3a3 2 0 0 0 6 0zM1446.2 274.3a3 2 0 0 0 6 0z" fill="#d4d4d4"/><path d="M1441.7 262.3h4l-2 2.500z" fill="#d4d4d4"/><rect x="1460.5" y="264.3" width="15" height="12" fill="#d0d0d0" stroke="#d4d4d4"/><rect x="1461" y="264.8" width="7" height="11" fill="#4c4c4c"/><rect x="1483.2" y="264.3" width="13" height="9" fill="#a8a8a8" stroke="#d4d4d4" stroke-width=".8"/><rect x="1487.7" y="262.3" width="4" height="2" fill="#d4d4d4"/><circle cx="1489.7" cy="268.8" r="2.600" fill="#666" stroke="#d4d4d4" stroke-width=".9"/><circle cx="1495.2" cy="272.8" r="4" fill="#9a9a9a" fill-opacity=".7" stroke="#d4d4d4" stroke-width="1.100"/><circle cx="1515.8" cy="267.8" r="4" fill="#e0e0e0"/><circle cx="1512.3" cy="272.8" r="4" fill="#c6c6c6"/><circle cx="1519.3" cy="272.8" r="4" fill="#b0b0b0"/><path d="M1513.8 269.8l2 2.500 2-2.500z" fill="#555"/><rect x="1532.5" y="264.3" width="15" height="12" fill="#6a6a6a" stroke="#d4d4d4"/><path d="M1532.5 268.3h15M1532.5 272.3h15M1537.5 264.3v12M1542.5 264.3v12" stroke="#d4d4d4" stroke-width="1.100"/><rect x="1533" y="264.8" width="4.500" height="3.500" fill="#c8c8c8"/><rect x="1538" y="272.8" width="4.500" height="3.500" fill="#3c3c3c"/><rect x="1424.5" y="291.1" width="15" height="12" fill="url(#ag)" stroke="#d4d4d4"/><ellipse cx="1432" cy="297.1" rx="4.500" ry="2.800" transform="rotate(-30 1432 297.1)" fill="#555"/><path d="M1425 302.6L1439 291.6" stroke="#555" stroke-width="1"/><rect x="1448.5" y="291.1" width="15" height="12" fill="#b8b8b8" stroke="#d4d4d4"/><path d="M1449 302.6l10-11h4.500l-10 11zM1459 302.6l4-4.500v4.500z" fill="#707070"/><rect x="1472.5" y="291.1" width="15" height="12" fill="#c4c4c4" stroke="#d4d4d4"/><path d="M1473 300.1v-3l3-1 2-3 3 1 2-3 3 0 2-2v4l-2 2-3 0-2 3-3-1-2 3z" fill="#4a4a4a"/><rect x="1496.5" y="291.1" width="15" height="12" fill="#8a8a8a" stroke="#d4d4d4"/><path d="M1496.5 291.1l7 6-7 6zM1511.5 291.1l-7 6 7 6z" fill="#cfcfcf"/><rect x="1520.5" y="291.1" width="15" height="12" fill="url(#ah)" stroke="#d4d4d4"/></svg>
<div class="panel" style="left:1377px;top:317px;width:222px;height:102px;"></div><div style="left:1377px;top:419px;width:207px;height:440px;background:#464646;"></div><div style="left:1584px;top:419px;width:15px;height:440px;background:#3f3f3f;"></div><div class="ptabs" style="left:1377px;top:317px;width:222px;"></div><div class="ptab on" style="left:1377px;top:317px;width:43px;"><div class="t pt" style="left:7.3px;transform:scaleX(0.789)">Layers</div></div><div class="ptab off" style="left:1420px;top:317px;width:57px;"><div class="t pt" style="left:7px;transform:scaleX(0.834)">Channels</div></div><div class="ptab off" style="left:1477px;top:317px;width:40px;"><div class="t pt" style="left:7.2px;transform:scaleX(0.834)">Paths</div></div><svg style="left:1582px;top:321px" width="15" height="9" viewBox="0 0 15 9"><path d="M0 2h5L2.500 5z" fill="#d6d6d6"/><path d="M6 1.500h9M6 4.500h9M6 7.500h9" stroke="#d6d6d6" stroke-width="1.300"/></svg>
<div class="dd dd2" style="left:1382px;top:339px;width:68px;height:19px;"></div><svg style="left:1387px;top:342px" width="12" height="12" viewBox="0 0 12 12"><circle cx="7" cy="5" r="3.300" fill="none" stroke="#c8c8c8" stroke-width="1.300"/><path d="M4.500 7.500L1 11" stroke="#c8c8c8" stroke-width="1.500"/></svg><div class="t lp" style="left:1403.300px;top:341.500px;font-size:11.500px;transform:scaleX(0.825)">Kind</div><svg style="left:1440px;top:343px" width="7" height="11" viewBox="0 0 7 11"><path d="M0 4h7L3.500 0zM0 7h7L3.500 11z" fill="#d8d8d8"/></svg><svg style="left:1455px;top:336px" width="144" height="24" viewBox="1455 336 144 24"><rect x="1463.500" y="342.500" width="12" height="10" fill="#5a5a5a" stroke="#bdbdbd"/><path d="M1465 351l3-4 2 2.500 1.500-1.500 2.500 3z" fill="#bdbdbd"/><circle cx="1472.500" cy="345.500" r="1" fill="#bdbdbd"/><circle cx="1492.800" cy="347.300" r="5" fill="#6a6a6a" stroke="#bdbdbd" stroke-width="1"/><path d="M1489.300 350.800a5 5 0 0 0 7-7z" fill="#bdbdbd"/><text x="1517" y="353" text-anchor="middle" font-family="Liberation Serif, serif" font-size="16" fill="#bdbdbd">T</text><rect x="1536.500" y="342.500" width="10" height="10" fill="none" stroke="#bdbdbd" stroke-width="1.200"/><rect x="1535" y="341" width="3" height="3" fill="#535353" stroke="#bdbdbd" stroke-width=".9"/><rect x="1545" y="341" width="3" height="3" fill="#535353" stroke="#bdbdbd" stroke-width=".9"/><rect x="1535" y="351" width="3" height="3" fill="#535353" stroke="#bdbdbd" stroke-width=".9"/><rect x="1545" y="351" width="3" height="3" fill="#535353" stroke="#bdbdbd" stroke-width=".9"/><path d="M1563.500 341.500h5l2.500 2.500v8h-7.500z" fill="#6a6a6a" stroke="#bdbdbd"/><rect x="1560.500" y="347.500" width="5" height="5" fill="#9a9a9a" stroke="#bdbdbd" stroke-width=".8"/><rect x="1585.500" y="340.500" width="8" height="15" rx="1" fill="#3f3f3f" stroke="#363636"/><rect x="1586" y="341" width="7" height="6.500" fill="#6e6e6e"/></svg>
<div style="left:1377px;top:361px;width:222px;height:1px;background:#3d3d3d;"></div><div style="left:1377px;top:362px;width:222px;height:1px;background:#5f5f5f;"></div><div class="dd dd2" style="left:1382px;top:367px;width:109px;height:18px;"></div><div class="t lp" style="left:1389.200px;top:369px;font-size:11.500px;transform:scaleX(0.836)">Normal</div><svg style="left:1481px;top:370.500px" width="7" height="11" viewBox="0 0 7 11"><path d="M0 4h7L3.500 0zM0 7h7L3.500 11z" fill="#d8d8d8"/></svg><div class="t lp" style="left:1498.800px;top:368.500px;font-size:11.500px;transform:scaleX(0.846)">Opacity:</div><div style="left:1541px;top:367px;width:53px;height:18px;box-sizing:border-box;background:#4a4a4a;border:1px solid #444;"></div><div style="left:1576px;top:368px;width:17px;height:16px;background:#5a5a5a;"></div><div class="t lp dis" style="left:1546.400px;top:369px;font-size:11.500px;color:#7b7b7b;transform:scaleX(0.836)">100%</div><svg style="left:1581.500px;top:374.500px" width="7" height="4" viewBox="0 0 7 4"><path d="M0 0h7L3.500 4z" fill="#a8a8a8"/></svg><div style="left:1377px;top:389px;width:222px;height:1px;background:#3d3d3d;"></div><div style="left:1377px;top:390px;width:222px;height:1px;background:#5f5f5f;"></div><div class="t lp" style="left:1383px;top:397px;font-size:11.500px;transform:scaleX(0.822)">Lock:</div><svg style="left:1410px;top:394px" width="90" height="20" viewBox="1410 394 90 20"><rect x="1415.500" y="398.500" width="11" height="11" fill="#9a9a9a" stroke="#a8a8a8"/><path d="M1416 399h3.500v3.500h-3.500zM1423 399h3.500v3.500h-3.500zM1419.500 402.500h3.500v3.500h-3.500zM1416 406h3.500v3.500h-3.500zM1423 406h3.500v3.500h-3.500z" fill="#6a6a6a"/><path d="M1452 397l1.200 1.200-8 9-2-1.500z" fill="#bdbdbd"/><path d="M1442.500 406l2 2c-1.500 2.500-5 3-8 2.500 2-1 3-1.500 3.500-3s1.200-1.800 2.500-1.500z" fill="#bdbdbd"/><path d="M1465.400 397.500v13M1458.900 404h13" stroke="#bdbdbd" stroke-width="1.200"/><path d="M1465.400 396l-2.300 2.800h4.600zM1465.400 412l-2.300-2.800h4.600zM1457.400 404l2.800-2.300v4.600zM1473.400 404l-2.800-2.300v4.600z" fill="#bdbdbd"/><rect x="1483.400" y="403" width="9" height="7" fill="#bdbdbd"/><path d="M1485.200 403v-2.500a2.700 2.700 0 0 1 5.400 0v2.500" fill="none" stroke="#bdbdbd" stroke-width="1.400"/></svg><div class="t lp" style="left:1521.300px;top:395.500px;font-size:11.500px;transform:scaleX(0.788)">Fill:</div><div style="left:1541px;top:395px;width:53px;height:18px;box-sizing:border-box;background:#4a4a4a;border:1px solid #444;"></div><div style="left:1576px;top:396px;width:17px;height:16px;background:#5a5a5a;"></div><div class="t lp dis" style="left:1546.400px;top:397px;font-size:11.500px;color:#7b7b7b;transform:scaleX(0.836)">100%</div><svg style="left:1581.500px;top:402.500px" width="7" height="4" viewBox="0 0 7 4"><path d="M0 0h7L3.500 4z" fill="#a8a8a8"/></svg><div style="left:1377px;top:418px;width:222px;height:1px;background:#3a3a3a;"></div>
<div style="left:1377px;top:419px;width:31px;height:39px;background:#535353;border-right:1px solid #444;box-sizing:border-box"></div><div style="left:1408px;top:419px;width:176px;height:39px;background:#596678;"></div><div style="left:1377px;top:458px;width:207px;height:1px;background:#3a3a3a;"></div><svg style="left:1385px;top:432px" width="15" height="11" viewBox="0 0 15 11"><path d="M.5 5.500C3 1 12 1 14.500 5.500 12 10 3 10 .5 5.500z" fill="#d8d8d8"/><circle cx="7.500" cy="5.500" r="2.800" fill="#4a4a4a"/><circle cx="7.500" cy="5.500" r="1.200" fill="#d8d8d8"/></svg><svg style="left:1411px;top:423px" width="32" height="31" viewBox="285 115 765 728" preserveAspectRatio="none"><use href="#artg"/></svg><div class="t lp" id="bgname" style="left:1453.700px;top:432.500px;font-size:11.500px;font-style:italic;color:#f4f4f4;transform:scaleX(0.852)">Background</div><svg style="left:1556px;top:432px" width="12" height="14" viewBox="0 0 12 14"><rect x="1.200" y="6.200" width="9.600" height="7" fill="none" stroke="#e0e0e0" stroke-width="1.400"/><path d="M3.200 6V4a2.800 2.800 0 0 1 5.600 0v2" fill="none" stroke="#e0e0e0" stroke-width="1.400"/><rect x="5" y="9" width="2" height="2" fill="#e0e0e0"/></svg>
</div>
</body>
</html>
